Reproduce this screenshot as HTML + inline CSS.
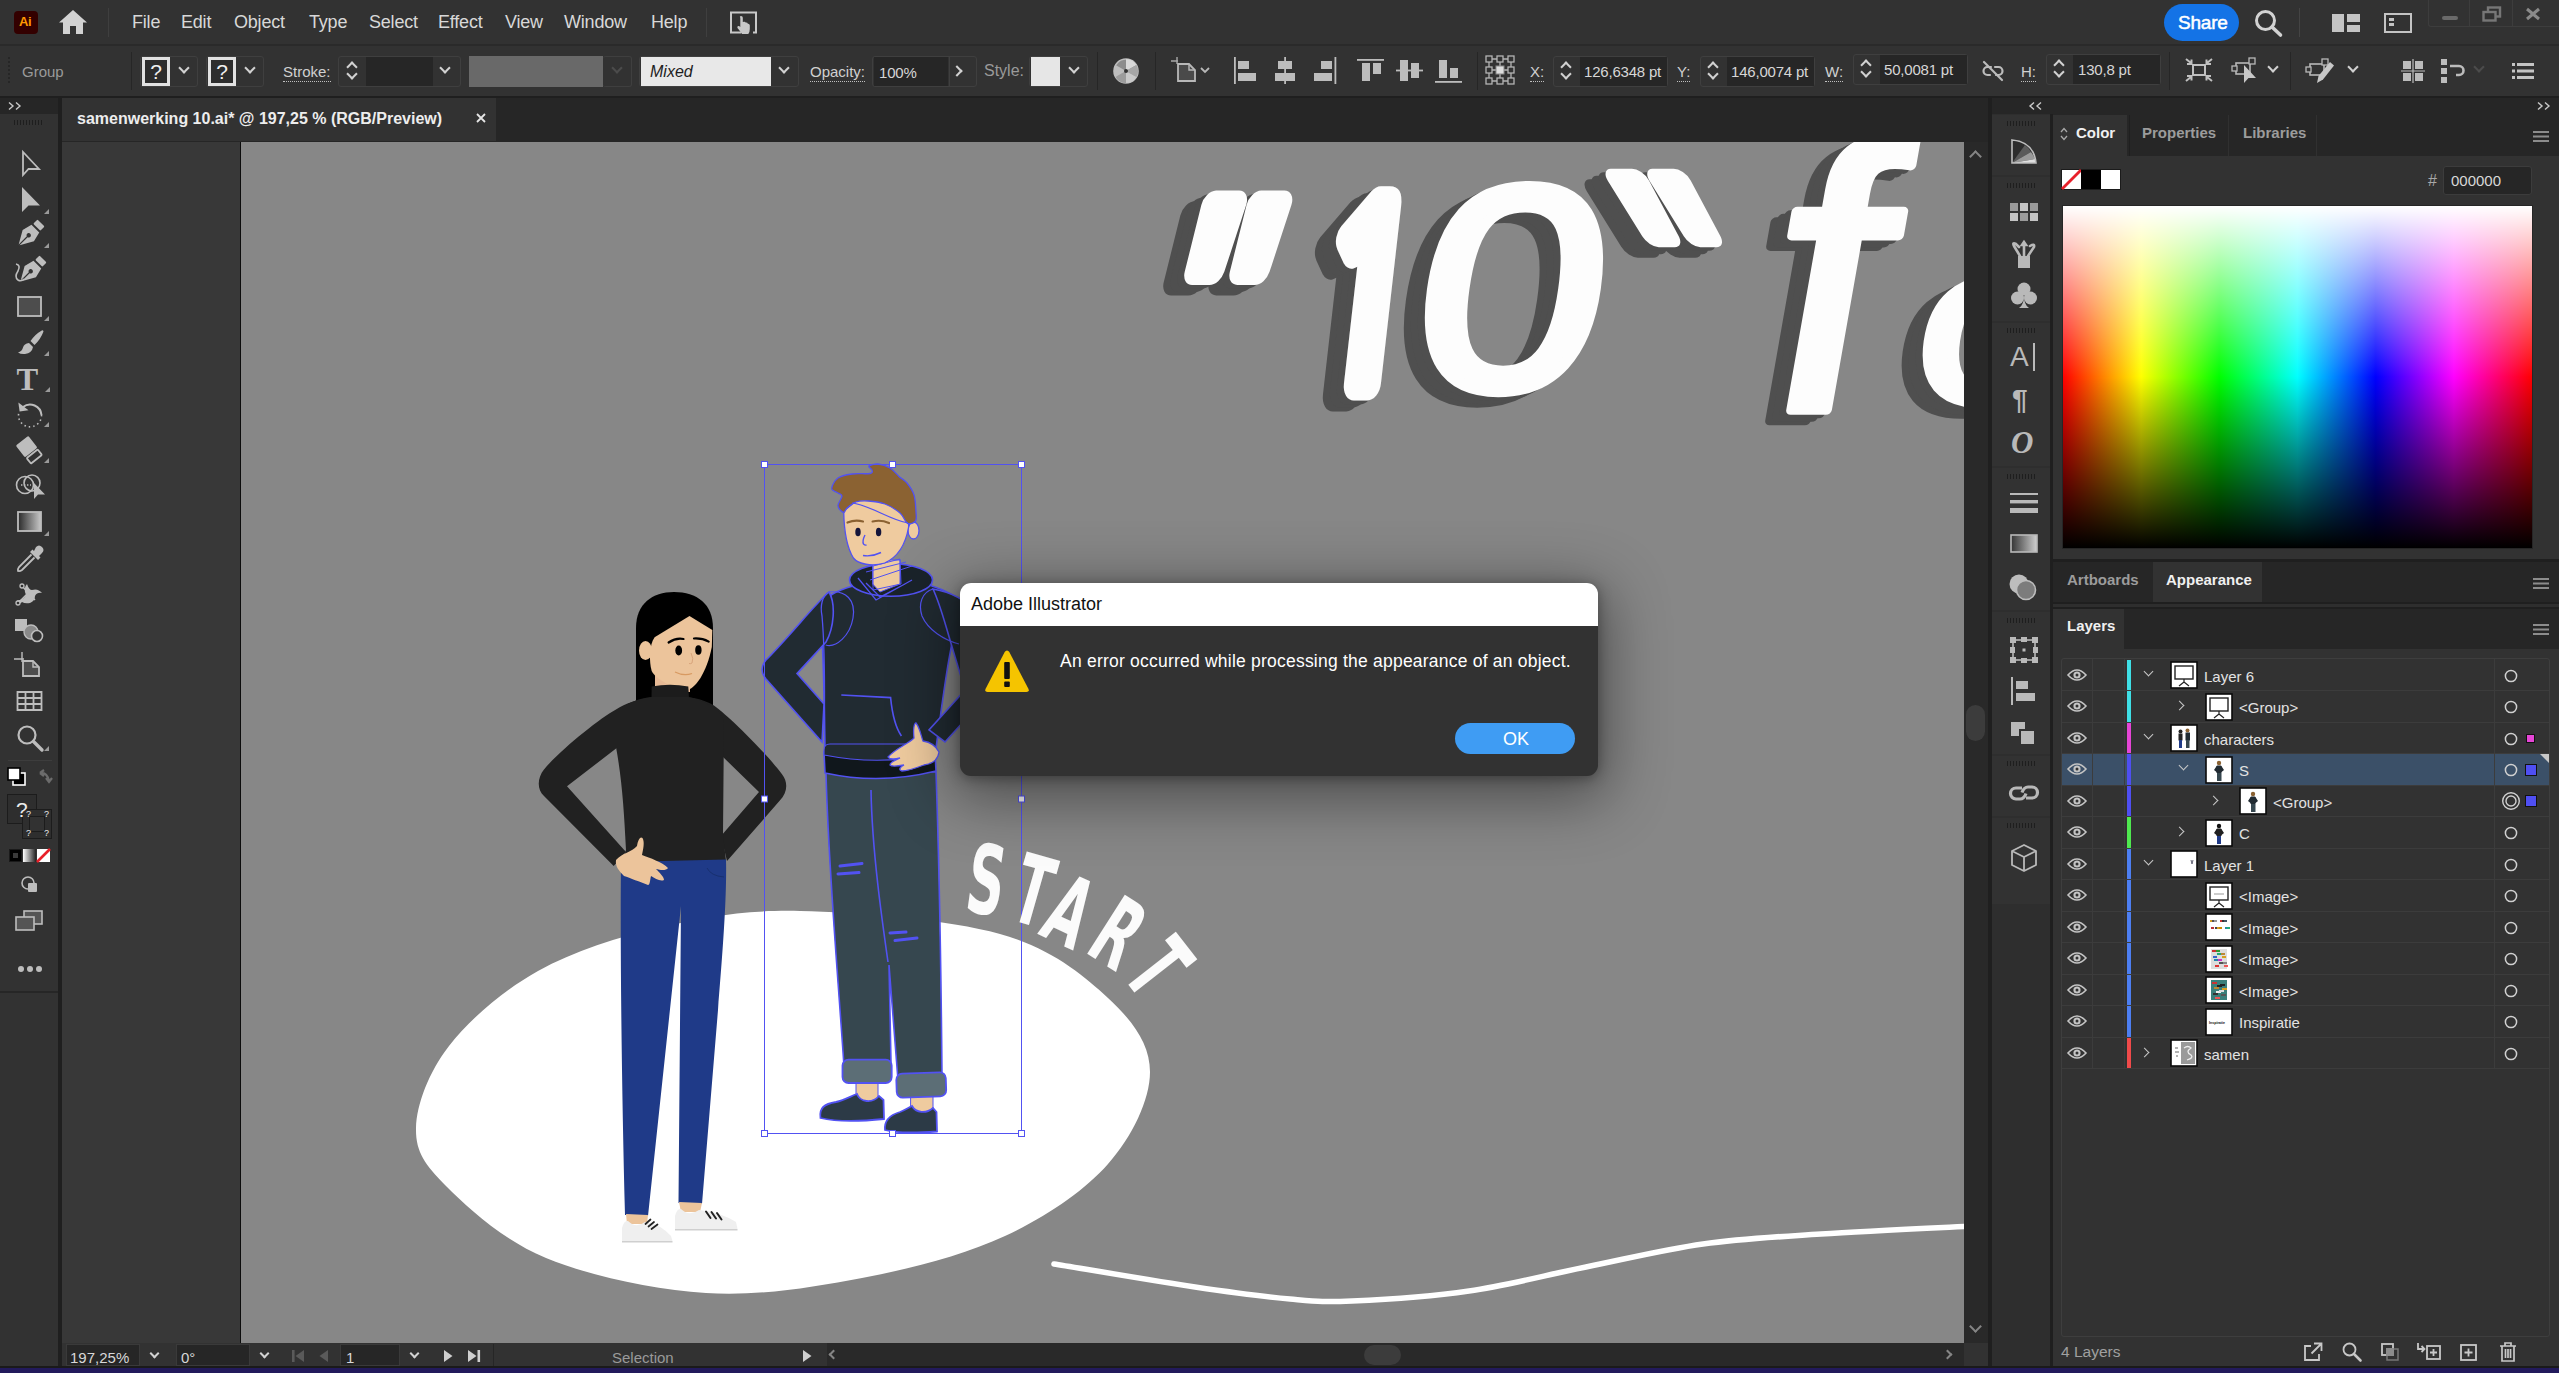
<!DOCTYPE html>
<html lang="en"><head><meta charset="utf-8"><title>Adobe Illustrator</title>
<style>
*{box-sizing:border-box;margin:0;padding:0}
html,body{width:2559px;height:1373px;overflow:hidden;background:#323232}
body{font-family:"Liberation Sans",sans-serif;color:#d6d6d6;font-size:15px}
#app{position:relative;width:2559px;height:1373px;overflow:hidden;background:#323232}
.abs{position:absolute}
.t{position:absolute;white-space:nowrap;line-height:1}
svg{position:absolute;overflow:visible}
.fld{position:absolute;background:#262626;border:1px solid #3e3e3e;border-radius:2px}
.sep{position:absolute;width:1px;background:#262626}
.dotu{border-bottom:1px dotted #bdbdbd;padding-bottom:1px}
</style>
<style>
.chv{position:absolute;width:8px;height:8px;border-right:2px solid #d2d2d2;border-bottom:2px solid #d2d2d2;transform:rotate(45deg)}
.chu{position:absolute;width:8px;height:8px;border-left:2px solid #d2d2d2;border-top:2px solid #d2d2d2;transform:rotate(45deg)}
.chr{position:absolute;width:8px;height:8px;border-right:2px solid #d2d2d2;border-top:2px solid #d2d2d2;transform:rotate(45deg)}
.chl{position:absolute;width:8px;height:8px;border-left:2px solid #d2d2d2;border-bottom:2px solid #d2d2d2;transform:rotate(45deg)}
.grp{position:absolute;border:1px solid #3f3f3f;border-radius:3px}
.cb{font-size:15px;color:#d6d6d6;letter-spacing:-0.2px;margin-top:1px}
.lbl{font-size:15px;margin-top:1px;color:#d0d0d0;border-bottom:1px dotted #c0c0c0;padding-bottom:2px}
.qbox{position:absolute;width:28px;height:29px;border:3px solid #e2e2e2;background:#2d2d2d;color:#f0f0f0;font-size:21px;text-align:center;line-height:23px}
</style>
</head><body>
<div id="app">
<!-- top.html -->
<!-- ===== MENU BAR ===== -->
<div class="abs" style="left:0;top:0;width:2559px;height:44px;background:#323232"></div>
<div class="abs" style="left:14px;top:11px;width:24px;height:23px;border-radius:4px;background:#330000"></div>
<div class="t" style="left:19px;top:15px;font-size:13px;font-weight:bold;color:#ff9a00;letter-spacing:-0.5px">Ai</div>
<svg style="left:58px;top:9px" width="30" height="26" viewBox="0 0 30 26"><path d="M15 1 L1 13.5 H5 V25 H12 V17 H18 V25 H25 V13.5 H29 Z" fill="#d2d2d2"/></svg>
<div class="sep" style="left:108px;top:8px;height:29px;background:#3f3f3f"></div>
<div class="t" style="left:132px;top:13px;font-size:18px;color:#d8d8d8;letter-spacing:-0.2px">File</div>
<div class="t" style="left:181px;top:13px;font-size:18px;color:#d8d8d8;letter-spacing:-0.2px">Edit</div>
<div class="t" style="left:234px;top:13px;font-size:18px;color:#d8d8d8;letter-spacing:-0.2px">Object</div>
<div class="t" style="left:309px;top:13px;font-size:18px;color:#d8d8d8;letter-spacing:-0.2px">Type</div>
<div class="t" style="left:369px;top:13px;font-size:18px;color:#d8d8d8;letter-spacing:-0.2px">Select</div>
<div class="t" style="left:438px;top:13px;font-size:18px;color:#d8d8d8;letter-spacing:-0.2px">Effect</div>
<div class="t" style="left:505px;top:13px;font-size:18px;color:#d8d8d8;letter-spacing:-0.2px">View</div>
<div class="t" style="left:564px;top:13px;font-size:18px;color:#d8d8d8;letter-spacing:-0.2px">Window</div>
<div class="t" style="left:651px;top:13px;font-size:18px;color:#d8d8d8;letter-spacing:-0.2px">Help</div>
<div class="sep" style="left:706px;top:8px;height:29px;background:#3f3f3f"></div>
<svg style="left:729px;top:10px" width="30" height="26" viewBox="0 0 30 26"><path d="M12 22.5 H2 V2.5 H27 V22.5 H24" fill="none" stroke="#c8c8c8" stroke-width="2"/><path d="M12 6 q1.8 0 1.8 1.8 V12 l1.2 -.3 q1.6 -.2 1.8 1 q1.6 -.4 2 1 q1.8 -.3 2 1.6 V19 q0 3 -1.5 5 H13 q-2 -3 -4.5 -6 q-.8 -1.6 .8 -2 q1 -.2 2 1 V7.8 Q10.2 6 12 6Z" fill="#c8c8c8"/></svg>
<!-- right side of menu bar -->
<div class="abs" style="left:2164px;top:4px;width:75px;height:37px;border-radius:19px;background:#1473e6"></div>
<div class="t" style="left:2178px;top:13px;font-size:19px;color:#fff;-webkit-text-stroke:0.5px #fff;letter-spacing:-0.2px">Share</div>
<svg style="left:2253px;top:8px" width="32" height="30" viewBox="0 0 32 30"><circle cx="12.5" cy="12.5" r="9" fill="none" stroke="#d2d2d2" stroke-width="3"/><path d="M19 19 L27.5 27" stroke="#d2d2d2" stroke-width="3.6" stroke-linecap="round"/></svg>
<div class="sep" style="left:2299px;top:8px;height:29px;background:#444"></div>
<svg style="left:2332px;top:14px" width="28" height="18" viewBox="0 0 28 18"><rect x="0" y="0" width="12" height="18" fill="#c4c4c4"/><rect x="15" y="0" width="13" height="8" fill="#c4c4c4"/><rect x="15" y="11" width="13" height="7" fill="#c4c4c4"/></svg>
<svg style="left:2384px;top:13px" width="28" height="20" viewBox="0 0 28 20"><rect x="1" y="1" width="26" height="18" fill="none" stroke="#c4c4c4" stroke-width="2"/><rect x="5" y="5" width="5" height="3" fill="#c4c4c4"/><rect x="5" y="10" width="5" height="3" fill="#c4c4c4"/></svg>
<div class="abs" style="left:2428px;top:0;width:131px;height:27px;border:1px solid #3d3d3d;border-top:0;border-right:0;border-radius:0 0 0 3px"></div>
<div class="abs" style="left:2469px;top:0;width:1px;height:27px;background:#3d3d3d"></div>
<div class="abs" style="left:2512px;top:0;width:1px;height:27px;background:#3d3d3d"></div>
<div class="abs" style="left:2442px;top:16px;width:16px;height:4px;border-radius:2px;background:#6a6a6a"></div>
<svg style="left:2482px;top:6px" width="20" height="16" viewBox="0 0 20 16"><rect x="6" y="1.5" width="12" height="9" fill="none" stroke="#777" stroke-width="2.4"/><rect x="1.5" y="6" width="12" height="8.5" fill="#323232" stroke="#777" stroke-width="2.4"/></svg>
<svg style="left:2525px;top:7px" width="16" height="14" viewBox="0 0 16 14"><path d="M2 2 L14 12 M14 2 L2 12" stroke="#8a8a8a" stroke-width="3" stroke-linecap="butt"/></svg>
<!-- ===== CONTROL BAR ===== -->
<div class="abs" style="left:0;top:44px;width:2559px;height:2px;background:#2a2a2a"></div>
<div class="abs" style="left:0;top:46px;width:2559px;height:50px;background:#323232"></div>
<div class="abs" style="left:0;top:96px;width:2559px;height:2px;background:#1f1f1f"></div>
<div class="abs" style="left:8px;top:57px;width:2px;height:28px;background:repeating-linear-gradient(#262626 0 2px,transparent 2px 4px)"></div>
<div class="t" style="left:22px;top:64px;font-size:15px;color:#9a9a9a">Group</div>
<div class="sep" style="left:131px;top:52px;height:38px"></div>
<!-- fill / stroke question boxes -->
<div class="grp" style="left:140px;top:56px;width:58px;height:31px"></div>
<div class="qbox" style="left:142px;top:57px">?</div>
<div class="chv" style="left:180px;top:64px"></div>
<div class="grp" style="left:206px;top:56px;width:58px;height:31px"></div>
<div class="qbox" style="left:208px;top:57px">?</div>
<div class="chv" style="left:246px;top:64px"></div>
<div class="t lbl" style="left:283px;top:63px">Stroke:</div>
<div class="grp" style="left:338px;top:56px;width:123px;height:31px"></div>
<div class="chu" style="left:348px;top:63px"></div><div class="chv" style="left:348px;top:70px"></div>
<div class="abs" style="left:366px;top:57px;width:67px;height:29px;background:#262626"></div>
<div class="chv" style="left:441px;top:64px"></div>
<div class="abs" style="left:469px;top:56px;width:134px;height:31px;background:#696969"></div>
<div class="grp" style="left:603px;top:56px;width:29px;height:31px;border-left:0"></div>
<div class="chv" style="left:613px;top:64px;border-color:#4c4c4c"></div>
<div class="grp" style="left:639px;top:56px;width:160px;height:31px"></div>
<div class="abs" style="left:641px;top:57px;width:130px;height:29px;background:#e8e8e8"></div>
<div class="t" style="left:650px;top:64px;font-size:16px;font-style:italic;color:#1e1e1e">Mixed</div>
<div class="chv" style="left:780px;top:64px"></div>
<div class="t lbl" style="left:810px;top:63px">Opacity:</div>
<div class="grp" style="left:872px;top:56px;width:105px;height:31px"></div>
<div class="abs" style="left:874px;top:57px;width:74px;height:29px;background:#262626"></div>
<div class="t cb" style="left:879px;top:64px">100%</div>
<div class="abs" style="left:949px;top:57px;width:1px;height:29px;background:#3f3f3f"></div>
<div class="chr" style="left:953px;top:67px"></div>
<div class="t" style="left:984px;top:63px;font-size:16px;color:#9a9a9a">Style:</div>
<div class="grp" style="left:1029px;top:56px;width:59px;height:31px"></div>
<div class="abs" style="left:1031px;top:57px;width:29px;height:29px;background:#e6e6e6"></div>
<div class="chv" style="left:1070px;top:64px"></div>
<div class="sep" style="left:1097px;top:52px;height:38px"></div>
<!-- recolor globe -->
<svg style="left:1113px;top:58px" width="26" height="26" viewBox="0 0 26 26"><circle cx="13" cy="13" r="12" fill="#8c8c8c" stroke="#bdbdbd" stroke-width="1.6"/><path d="M13 13 L13 1 A12 12 0 0 1 23.4 7 Z" fill="#d8d8d8"/><path d="M13 13 L23.4 7 A12 12 0 0 1 23.4 19Z" fill="#a6a6a6"/><path d="M13 13 L23.4 19 A12 12 0 0 1 13 25Z" fill="#c9c9c9"/><path d="M13 13 L13 25 A12 12 0 0 1 2.6 19Z" fill="#9c9c9c"/><path d="M13 13 L2.6 19 A12 12 0 0 1 2.6 7Z" fill="#bdbdbd"/><circle cx="13" cy="13" r="2" fill="#333"/></svg>
<div class="sep" style="left:1155px;top:52px;height:38px"></div>
<!-- document setup -->
<svg style="left:1170px;top:56px" width="42" height="30" viewBox="0 0 42 30"><path d="M7 1 V8 M1 5 H8" stroke="#a8a8a8" stroke-width="1.4"/><path d="M8 8 H19 L25 14 V25 H8Z" fill="#4a4a4a" stroke="#b8b8b8" stroke-width="1.8"/><path d="M19 8 V14 H25" fill="none" stroke="#b8b8b8" stroke-width="1.4"/><path d="M31 12 L35 16 L39 12" fill="none" stroke="#b8b8b8" stroke-width="1.8"/></svg>
<!-- align icons -->
<svg style="left:1233px;top:56px" width="24" height="30" viewBox="0 0 24 30"><rect x="1" y="1" width="1.8" height="27" fill="#bcbcbc"/><rect x="5" y="5" width="11" height="8" fill="#bcbcbc"/><rect x="5" y="17" width="18" height="8" fill="#bcbcbc"/></svg>
<svg style="left:1274px;top:56px" width="24" height="30" viewBox="0 0 24 30"><rect x="10.2" y="1" width="1.8" height="27" fill="#bcbcbc"/><rect x="4" y="5" width="14" height="8" fill="#bcbcbc"/><rect x="1" y="17" width="20" height="8" fill="#bcbcbc"/></svg>
<svg style="left:1312px;top:56px" width="26" height="30" viewBox="0 0 26 30"><rect x="22.5" y="1" width="1.8" height="27" fill="#bcbcbc"/><rect x="9" y="5" width="11" height="8" fill="#bcbcbc"/><rect x="2" y="17" width="18" height="8" fill="#bcbcbc"/></svg>
<svg style="left:1356px;top:58px" width="30" height="26" viewBox="0 0 30 26"><rect x="1" y="1" width="27" height="1.8" fill="#bcbcbc"/><rect x="6" y="5" width="8" height="18" fill="#bcbcbc"/><rect x="17" y="5" width="8" height="11" fill="#bcbcbc"/></svg>
<svg style="left:1395px;top:58px" width="30" height="26" viewBox="0 0 30 26"><rect x="1" y="11.6" width="27" height="1.8" fill="#bcbcbc"/><rect x="5" y="2" width="8" height="21" fill="#bcbcbc"/><rect x="16" y="5" width="8" height="15" fill="#bcbcbc"/></svg>
<svg style="left:1434px;top:58px" width="30" height="26" viewBox="0 0 30 26"><rect x="1" y="23" width="27" height="1.8" fill="#bcbcbc"/><rect x="5" y="2" width="8" height="18" fill="#bcbcbc"/><rect x="16" y="10" width="8" height="10" fill="#bcbcbc"/></svg>
<div class="sep" style="left:1477px;top:52px;height:38px"></div>
<!-- reference point grid -->
<svg style="left:1485px;top:55px" width="30" height="30" viewBox="0 0 30 30"><g fill="none" stroke="#b4b4b4" stroke-width="1.3"><path d="M4 4 H26 V26 H4Z M15 4 V26 M4 15 H26"/></g><g fill="#323232" stroke="#b4b4b4" stroke-width="1.3"><rect x="1" y="1" width="6" height="6"/><rect x="12" y="1" width="6" height="6"/><rect x="23" y="1" width="6" height="6"/><rect x="1" y="12" width="6" height="6"/><rect x="23" y="12" width="6" height="6"/><rect x="1" y="23" width="6" height="6"/><rect x="12" y="23" width="6" height="6"/><rect x="23" y="23" width="6" height="6"/></g><rect x="11" y="11" width="8" height="8" fill="#dcdcdc" stroke="#8a8a8a"/></svg>
<!-- X Y W H -->
<div class="t lbl" style="left:1530px;top:63px">X:</div>
<div class="grp" style="left:1553px;top:56px;width:115px;height:31px"></div>
<div class="chu" style="left:1562px;top:63px"></div><div class="chv" style="left:1562px;top:70px"></div>
<div class="abs" style="left:1580px;top:57px;width:87px;height:29px;background:#262626"></div>
<div class="t cb" style="left:1584px;top:63px">126,6348 pt</div>
<div class="t lbl" style="left:1677px;top:63px">Y:</div>
<div class="grp" style="left:1700px;top:56px;width:115px;height:31px"></div>
<div class="chu" style="left:1709px;top:63px"></div><div class="chv" style="left:1709px;top:70px"></div>
<div class="abs" style="left:1727px;top:57px;width:87px;height:29px;background:#262626"></div>
<div class="t cb" style="left:1731px;top:63px">146,0074 pt</div>
<div class="t lbl" style="left:1825px;top:63px">W:</div>
<div class="grp" style="left:1853px;top:54px;width:115px;height:31px"></div>
<div class="chu" style="left:1862px;top:61px"></div><div class="chv" style="left:1862px;top:68px"></div>
<div class="abs" style="left:1880px;top:55px;width:87px;height:29px;background:#262626"></div>
<div class="t cb" style="left:1884px;top:61px">50,0081 pt</div>
<svg style="left:1981px;top:60px" width="24" height="22" viewBox="0 0 24 22"><g fill="none" stroke="#bcbcbc" stroke-width="2.2" stroke-linecap="round"><path d="M10 7 H6.5 a4 4 0 0 0 0 8 H9"/><path d="M14 7 H17.5 a4 4 0 0 1 0 8 H15"/><path d="M3 2 L21 20"/></g></svg>
<div class="t lbl" style="left:2021px;top:63px">H:</div>
<div class="grp" style="left:2046px;top:54px;width:115px;height:31px"></div>
<div class="chu" style="left:2055px;top:61px"></div><div class="chv" style="left:2055px;top:68px"></div>
<div class="abs" style="left:2073px;top:55px;width:87px;height:29px;background:#262626"></div>
<div class="t cb" style="left:2078px;top:61px">130,8 pt</div>
<div class="sep" style="left:2169px;top:52px;height:38px"></div>
<!-- right cluster icons -->
<svg style="left:2184px;top:57px" width="30" height="26" viewBox="0 0 30 26"><rect x="9" y="8" width="12" height="10" fill="none" stroke="#c0c0c0" stroke-width="2"/><g stroke="#c0c0c0" stroke-width="2" fill="none"><path d="M2 2 L7 6 M3 7 H7.5 V2.5"/><path d="M28 2 L23 6 M27 7 H22.5 V2.5"/><path d="M2 24 L7 20 M3 19 H7.5 V23.5"/><path d="M28 24 L23 20 M27 19 H22.5 V23.5"/></g></svg>
<svg style="left:2231px;top:56px" width="34" height="30" viewBox="0 0 34 30"><rect x="5" y="7" width="14" height="11" fill="none" stroke="#b8b8b8" stroke-width="1.6"/><rect x="1" y="10" width="5" height="5" fill="#323232" stroke="#b8b8b8" stroke-width="1.3"/><rect x="18" y="2" width="6" height="6" fill="#323232" stroke="#b8b8b8" stroke-width="1.3"/><path d="M13 9 V27 L17.5 22 L25 22Z" fill="#c8c8c8"/></svg>
<div class="chv" style="left:2269px;top:63px"></div>
<div class="sep" style="left:2290px;top:52px;height:38px"></div>
<svg style="left:2305px;top:56px" width="32" height="30" viewBox="0 0 32 30"><rect x="5" y="8" width="14" height="11" fill="none" stroke="#b8b8b8" stroke-width="1.6"/><rect x="1" y="11" width="5" height="5" fill="#323232" stroke="#b8b8b8" stroke-width="1.3"/><rect x="17" y="3" width="6" height="6" fill="#323232" stroke="#b8b8b8" stroke-width="1.3"/><path d="M12 27 L13.5 20 L25 6 L29 9.5 L18 23.5Z" fill="#c8c8c8"/></svg>
<div class="chv" style="left:2349px;top:63px"></div>
<svg style="left:2400px;top:58px" width="26" height="26" viewBox="0 0 26 26"><g fill="#bcbcbc"><rect x="3" y="3" width="8" height="8"/><rect x="15" y="3" width="8" height="8"/><rect x="3" y="15" width="8" height="8"/><rect x="15" y="15" width="8" height="8"/></g><path d="M13 0 V26 M0 13 H26" stroke="#323232" stroke-width="2"/><path d="M13 1 V25 M1 13 H25" stroke="#bcbcbc" stroke-width="1.2"/></svg>
<svg style="left:2440px;top:58px" width="26" height="26" viewBox="0 0 26 26"><g fill="#bcbcbc"><rect x="1" y="1" width="6" height="6"/><rect x="1" y="10" width="6" height="6"/><rect x="1" y="19" width="6" height="6"/></g><path d="M10 8 H19 a4.5 4.5 0 0 1 0 9 H16" fill="none" stroke="#bcbcbc" stroke-width="2.6"/></svg>
<div class="chv" style="left:2475px;top:63px;border-color:#4c4c4c"></div>
<svg style="left:2512px;top:62px" width="22" height="18" viewBox="0 0 22 18"><g fill="#c4c4c4"><rect x="0" y="1" width="3" height="3"/><rect x="5" y="1" width="17" height="3"/><rect x="0" y="7.5" width="3" height="3"/><rect x="5" y="7.5" width="17" height="3"/><rect x="0" y="14" width="3" height="3"/><rect x="5" y="14" width="17" height="3"/></g></svg>
<!-- ===== DOC TAB STRIP ===== -->
<div class="abs" style="left:58px;top:98px;width:1934px;height:44px;background:#262626"></div>
<div class="abs" style="left:62px;top:98px;width:434px;height:43px;background:#323232"></div>
<div class="t" style="left:77px;top:111px;font-size:16px;font-weight:bold;color:#ededed">samenwerking 10.ai* @ 197,25 % (RGB/Preview)</div>
<svg style="left:476px;top:113px" width="10" height="10" viewBox="0 0 10 10"><path d="M1 1 L9 9 M9 1 L1 9" stroke="#e6e6e6" stroke-width="1.8"/></svg>
<!-- left.html -->
<!-- ===== LEFT TOOLBAR ===== -->
<div class="abs" style="left:0;top:98px;width:58px;height:1268px;background:#323232"></div>
<div class="abs" style="left:58px;top:98px;width:4px;height:1268px;background:#1f1f1f"></div>
<div class="abs" style="left:0;top:98px;width:58px;height:16px;background:#262626"></div>
<svg style="left:8px;top:101px" width="14" height="10" viewBox="0 0 14 10"><path d="M1 1.5 L5 5 L1 8.5 M8 1.5 L12 5 L8 8.5" fill="none" stroke="#c8c8c8" stroke-width="1.4"/></svg>
<div class="abs" style="left:14px;top:120px;width:28px;height:5px;background:repeating-linear-gradient(90deg,#1e1e1e 0 1px,transparent 1px 3px)"></div>
<!-- selection tool -->
<svg style="left:14px;top:148px" width="32" height="32" viewBox="0 0 32 32"><path d="M9 4 V27 L14.5 21 H25 Z" fill="none" stroke="#bdbdbd" stroke-width="1.8" stroke-linejoin="miter"/></svg>
<!-- direct selection -->
<svg style="left:14px;top:184px" width="40" height="34" viewBox="0 0 40 34"><path d="M8 3 V28 L14.5 21.5 H26 Z" fill="#bdbdbd"/><path d="M35 25 V30 H30Z" fill="#9a9a9a"/></svg>
<!-- pen -->
<svg style="left:12px;top:218px" width="42" height="34" viewBox="0 0 42 34"><g transform="rotate(45 17 17)" fill="#bdbdbd"><rect x="12" y="0" width="10" height="6" rx="1"/><path d="M11.5 8 H22.5 L25 18 L17.6 31 V19.5 a2.2 2.2 0 1 0 -1.2 0 V31 L9 18Z"/></g><path d="M37 25 V30 H32Z" fill="#9a9a9a"/></svg>
<!-- curvature -->
<svg style="left:10px;top:254px" width="42" height="34" viewBox="0 0 42 34"><g transform="translate(4 0) rotate(45 17 17)" fill="#bdbdbd"><rect x="12" y="0" width="10" height="6" rx="1"/><path d="M11.5 8 H22.5 L25 18 L17.6 31 V19.5 a2.2 2.2 0 1 0 -1.2 0 V31 L9 18Z"/></g><path d="M6 10 q5 1 2 7 q-4 6 0 9 q3 2 6 -1" fill="none" stroke="#bdbdbd" stroke-width="1.6"/></svg>
<!-- rectangle -->
<svg style="left:16px;top:295px" width="38" height="30" viewBox="0 0 38 30"><rect x="2" y="2" width="23" height="19" fill="#4d4d4d" stroke="#bdbdbd" stroke-width="1.8"/><path d="M33 21 V26 H28Z" fill="#9a9a9a"/></svg>
<!-- brush -->
<svg style="left:14px;top:326px" width="40" height="36" viewBox="0 0 40 36"><path d="M27 5 q2 -1.5 2.5 .5 q-3 8 -9 13.5 l-4 -4 q5 -7 10.5 -10Z" fill="#bdbdbd"/><path d="M15 17 l4 4 q-1 6 -8 7 q-4 .5 -7 -1.5 q4 -1 5 -5 q1 -4 6 -4.500Z" fill="#bdbdbd"/><path d="M35 25 V30 H30Z" fill="#9a9a9a"/></svg>
<!-- type -->
<div class="t" style="left:17px;top:364px;font-family:'Liberation Serif',serif;font-size:31px;color:#bdbdbd;font-weight:bold;transform:scaleX(1.05)">T</div>
<svg style="left:44px;top:386px" width="8" height="8" viewBox="0 0 8 8"><path d="M6 1 V6 H1Z" fill="#9a9a9a"/></svg>
<!-- rotate -->
<svg style="left:14px;top:398px" width="40" height="34" viewBox="0 0 40 34"><path d="M9 9 A11.5 11.5 0 0 1 27.5 17" fill="none" stroke="#bdbdbd" stroke-width="2"/><path d="M5 4 V13 H14Z" fill="#bdbdbd" transform="rotate(-8 9 9)"/><path d="M27.500 17 A11.5 11.5 0 1 1 5 14" fill="none" stroke="#bdbdbd" stroke-width="1.6" stroke-dasharray="1.5 3"/><path d="M35 24 V29 H30Z" fill="#9a9a9a"/></svg>
<!-- eraser -->
<svg style="left:14px;top:434px" width="40" height="34" viewBox="0 0 40 34"><g transform="rotate(-38 16 17)"><rect x="8" y="4" width="16" height="15" rx="1.5" fill="#bdbdbd"/><rect x="9" y="20.500" width="14" height="7" rx="1" fill="none" stroke="#bdbdbd" stroke-width="1.8"/></g><path d="M35 24 V29 H30Z" fill="#9a9a9a"/></svg>
<!-- shape builder -->
<svg style="left:12px;top:470px" width="40" height="34" viewBox="0 0 40 34"><circle cx="13" cy="15" r="8.500" fill="none" stroke="#bdbdbd" stroke-width="1.6"/><circle cx="20" cy="13" r="8" fill="none" stroke="#bdbdbd" stroke-width="1.6"/><path d="M9 15 H19" stroke="#bdbdbd" stroke-width="1.4" stroke-dasharray="1.400 1.600"/><path d="M22 13 V29 L26 24.500 H33Z" fill="#bdbdbd"/></svg>
<!-- gradient -->
<svg style="left:16px;top:510px" width="38" height="30" viewBox="0 0 38 30"><defs><linearGradient id="lg1" x1="0" x2="1"><stop offset="0" stop-color="#2a2a2a"/><stop offset="1" stop-color="#c8c8c8"/></linearGradient></defs><rect x="2" y="2" width="23" height="19" fill="url(#lg1)" stroke="#bdbdbd" stroke-width="1.8"/><path d="M33 21 V26 H28Z" fill="#9a9a9a"/></svg>
<!-- eyedropper -->
<svg style="left:14px;top:542px" width="36" height="34" viewBox="0 0 36 34"><path d="M22 5 q3 -3 6 0 q3 3 0 6 l-3 3 l1.500 1.500 l-2.500 2.500 l-8 -8 l2.500 -2.500 l1.500 1.500Z" fill="#bdbdbd"/><path d="M17.500 12.500 L5 25 q-1.500 2 -1 4 q2 .5 4 -1 L20.500 15.500" fill="none" stroke="#bdbdbd" stroke-width="1.800"/></svg>
<!-- puppet warp -->
<svg style="left:12px;top:578px" width="38" height="34" viewBox="0 0 38 34"><path d="M5 22 q6 1 9 -5 q-3 -7 1 -11 q2 6 5 6 q6 -2 10 3 q-5 -1 -7 3 q0 5 -5 7 q-5 1 -8 -1 q-2 3 -5 -2Z" fill="#bdbdbd"/><path d="M10 8 L23 22 M6 25 L17 14" stroke="#bdbdbd" stroke-width="1.400"/><circle cx="10" cy="8" r="2" fill="#323232" stroke="#bdbdbd" stroke-width="1.300"/><circle cx="6" cy="25" r="2" fill="#323232" stroke="#bdbdbd" stroke-width="1.300"/></svg>
<!-- live paint / shape -->
<svg style="left:12px;top:615px" width="36" height="32" viewBox="0 0 36 32"><rect x="3" y="4" width="12" height="12" fill="#bdbdbd"/><circle cx="19" cy="17" r="7" fill="#8a8a8a" stroke="#bdbdbd" stroke-width="1.400"/><circle cx="25" cy="21" r="5.500" fill="#323232" stroke="#bdbdbd" stroke-width="1.600"/></svg>
<!-- artboard -->
<svg style="left:12px;top:650px" width="36" height="32" viewBox="0 0 36 32"><path d="M10 2 V12 M2 9 H12" stroke="#bdbdbd" stroke-width="1.400"/><path d="M11 11 H21 L27 17 V26 H11Z" fill="#4d4d4d" stroke="#bdbdbd" stroke-width="1.800"/><path d="M21 11 V17 H27" fill="none" stroke="#bdbdbd" stroke-width="1.400"/></svg>
<!-- grid -->
<svg style="left:16px;top:690px" width="28" height="24" viewBox="0 0 28 24"><path d="M1.500 2 H25.500 V20 H1.500Z M1.500 8 H25.500 M1.500 14 H25.500 M9.500 2 V20 M17.500 2 V20" fill="none" stroke="#bdbdbd" stroke-width="1.800"/></svg>
<!-- zoom -->
<svg style="left:14px;top:722px" width="40" height="34" viewBox="0 0 40 34"><circle cx="13" cy="13" r="8.500" fill="none" stroke="#bdbdbd" stroke-width="2.200"/><path d="M19.500 19.500 L28 28" stroke="#bdbdbd" stroke-width="3.400" stroke-linecap="round"/><path d="M35 24 V29 H30Z" fill="#9a9a9a"/></svg>
<div class="abs" style="left:8px;top:760px;width:44px;height:1px;background:#3d3d3d"></div>
<!-- default fill/stroke + swap -->
<svg style="left:6px;top:765px" width="50" height="24" viewBox="0 0 50 24"><rect x="7" y="8" width="12" height="12" fill="#000" stroke="#fff" stroke-width="1.600"/><rect x="2" y="3" width="12" height="12" fill="#fff" stroke="#000" stroke-width="1.600"/><path d="M34 8 q7 -1 9 8 M40 13 l3 4 l3 -4 M34 8 l4 -3 M34 8 l4 3" fill="none" stroke="#6c6c6c" stroke-width="2.200"/></svg>
<!-- fill ? / stroke ? -->
<div class="abs" style="left:7px;top:794px;width:30px;height:30px;border:1px solid #1c1c1c;background:#2e2e2e"></div>
<div class="abs" style="left:22px;top:809px;width:30px;height:30px;border:1px solid #1c1c1c;background:#2e2e2e"></div>
<div class="abs" style="left:29px;top:816px;width:16px;height:16px;border:1px solid #1c1c1c;background:#323232"></div>
<div class="t" style="left:26px;top:810px;font-size:9px;color:#ececec">?</div><div class="t" style="left:44px;top:810px;font-size:9px;color:#ececec">?</div>
<div class="t" style="left:26px;top:829px;font-size:9px;color:#ececec">?</div><div class="t" style="left:44px;top:829px;font-size:9px;color:#ececec">?</div>
<div class="t" style="left:16px;top:799px;font-size:21px;color:#ececec">?</div>
<!-- color / gradient / none -->
<div class="abs" style="left:9px;top:849px;width:13px;height:13px;background:#000;border:1px solid #1a1a1a"></div>
<div class="abs" style="left:13px;top:853px;width:5px;height:5px;background:#3a3a3a"></div>
<div class="abs" style="left:23px;top:849px;width:13px;height:13px;background:linear-gradient(90deg,#fff,#222)"></div>
<svg style="left:37px;top:849px" width="13" height="13" viewBox="0 0 13 13"><rect width="13" height="13" fill="#fff"/><path d="M0 13 L13 0" stroke="#e8202a" stroke-width="2.600"/></svg>
<!-- draw mode -->
<svg style="left:18px;top:874px" width="24" height="22" viewBox="0 0 24 22"><circle cx="10" cy="9" r="6" fill="none" stroke="#bdbdbd" stroke-width="1.600"/><rect x="10" y="9" width="9" height="9" rx="1" fill="#bdbdbd"/></svg>
<!-- screen mode -->
<svg style="left:14px;top:909px" width="30" height="24" viewBox="0 0 30 24"><rect x="10" y="2" width="18" height="13" fill="#555" stroke="#bdbdbd" stroke-width="1.600"/><rect x="2" y="8" width="18" height="13" fill="#555" stroke="#bdbdbd" stroke-width="1.600"/><rect x="10" y="2" width="18" height="13" fill="#555" stroke="#bdbdbd" stroke-width="1.600" opacity=".0"/></svg>
<div class="abs" style="left:18px;top:966px;width:6px;height:6px;border-radius:3px;background:#bdbdbd"></div>
<div class="abs" style="left:27px;top:966px;width:6px;height:6px;border-radius:3px;background:#bdbdbd"></div>
<div class="abs" style="left:36px;top:966px;width:6px;height:6px;border-radius:3px;background:#bdbdbd"></div>
<div class="abs" style="left:0;top:991px;width:58px;height:2px;background:#262626"></div>
<!-- canvas.html -->
<svg style="left:62px;top:142px;overflow:hidden" width="1902" height="1201" viewBox="62 142 1902 1201">
<rect x="62" y="142" width="179" height="1201" fill="#383838"/>
<rect x="240" y="142" width="1.200" height="1201" fill="#0c0c0c"/>
<rect x="241" y="142" width="1723" height="1201" fill="#878787"/>
<g><text transform="translate(1120.0 427.5) skewX(-16) scale(0.93 1.145)" font-family="Liberation Sans, sans-serif" font-weight="normal" font-size="270" fill="#4f4f4f" stroke="#4f4f4f" stroke-width="24" stroke-linejoin="round">&quot;</text><text transform="translate(1286.0 396.5) skewX(-6.5) scale(0.628 0.911)" font-family="NanumGothic, Liberation Sans, sans-serif" font-weight="bold" font-size="270" fill="#4f4f4f" stroke="#4f4f4f" stroke-width="30" stroke-linejoin="round">1</text><text transform="translate(1385.0 399.5) skewX(-8) scale(1.25 1.075)" font-family="Liberation Sans, sans-serif" font-weight="normal" font-size="270" fill="#4f4f4f" stroke="#4f4f4f" stroke-width="10" stroke-linejoin="round">0</text><text transform="translate(1689.0 367.5) skewX(30) scale(0.857 0.952)" font-family="Liberation Sans, sans-serif" font-weight="normal" font-size="270" fill="#4f4f4f" stroke="#4f4f4f" stroke-width="24" stroke-linejoin="round">&quot;</text><text transform="translate(1735.0 420.5) skewX(-10) scale(1.485 1.391)" font-family="Liberation Sans, sans-serif" font-weight="normal" font-size="270" fill="#4f4f4f" stroke="#4f4f4f" stroke-width="7" stroke-linejoin="round">f</text><text transform="translate(1889.0 411.5) skewX(-8) scale(0.986 0.838)" font-family="Liberation Sans, sans-serif" font-weight="normal" font-size="270" fill="#4f4f4f" stroke="#4f4f4f" stroke-width="12" stroke-linejoin="round">o</text><text transform="translate(1127.0 424.0) skewX(-16) scale(0.93 1.145)" font-family="Liberation Sans, sans-serif" font-weight="normal" font-size="270" fill="#4f4f4f" stroke="#4f4f4f" stroke-width="24" stroke-linejoin="round">&quot;</text><text transform="translate(1293.0 393.0) skewX(-6.5) scale(0.628 0.911)" font-family="NanumGothic, Liberation Sans, sans-serif" font-weight="bold" font-size="270" fill="#4f4f4f" stroke="#4f4f4f" stroke-width="30" stroke-linejoin="round">1</text><text transform="translate(1392.0 396.0) skewX(-8) scale(1.25 1.075)" font-family="Liberation Sans, sans-serif" font-weight="normal" font-size="270" fill="#4f4f4f" stroke="#4f4f4f" stroke-width="10" stroke-linejoin="round">0</text><text transform="translate(1696.0 364.0) skewX(30) scale(0.857 0.952)" font-family="Liberation Sans, sans-serif" font-weight="normal" font-size="270" fill="#4f4f4f" stroke="#4f4f4f" stroke-width="24" stroke-linejoin="round">&quot;</text><text transform="translate(1742.0 417.0) skewX(-10) scale(1.485 1.391)" font-family="Liberation Sans, sans-serif" font-weight="normal" font-size="270" fill="#4f4f4f" stroke="#4f4f4f" stroke-width="7" stroke-linejoin="round">f</text><text transform="translate(1896.0 408.0) skewX(-8) scale(0.986 0.838)" font-family="Liberation Sans, sans-serif" font-weight="normal" font-size="270" fill="#4f4f4f" stroke="#4f4f4f" stroke-width="12" stroke-linejoin="round">o</text><text transform="translate(1134.0 420.5) skewX(-16) scale(0.93 1.145)" font-family="Liberation Sans, sans-serif" font-weight="normal" font-size="270" fill="#4f4f4f" stroke="#4f4f4f" stroke-width="24" stroke-linejoin="round">&quot;</text><text transform="translate(1300.0 389.5) skewX(-6.5) scale(0.628 0.911)" font-family="NanumGothic, Liberation Sans, sans-serif" font-weight="bold" font-size="270" fill="#4f4f4f" stroke="#4f4f4f" stroke-width="30" stroke-linejoin="round">1</text><text transform="translate(1399.0 392.5) skewX(-8) scale(1.25 1.075)" font-family="Liberation Sans, sans-serif" font-weight="normal" font-size="270" fill="#4f4f4f" stroke="#4f4f4f" stroke-width="10" stroke-linejoin="round">0</text><text transform="translate(1703.0 360.5) skewX(30) scale(0.857 0.952)" font-family="Liberation Sans, sans-serif" font-weight="normal" font-size="270" fill="#4f4f4f" stroke="#4f4f4f" stroke-width="24" stroke-linejoin="round">&quot;</text><text transform="translate(1749.0 413.5) skewX(-10) scale(1.485 1.391)" font-family="Liberation Sans, sans-serif" font-weight="normal" font-size="270" fill="#4f4f4f" stroke="#4f4f4f" stroke-width="7" stroke-linejoin="round">f</text><text transform="translate(1903.0 404.5) skewX(-8) scale(0.986 0.838)" font-family="Liberation Sans, sans-serif" font-weight="normal" font-size="270" fill="#4f4f4f" stroke="#4f4f4f" stroke-width="12" stroke-linejoin="round">o</text><text transform="translate(1141.0 417.0) skewX(-16) scale(0.93 1.145)" font-family="Liberation Sans, sans-serif" font-weight="normal" font-size="270" fill="#fdfdfd" stroke="#fdfdfd" stroke-width="24" stroke-linejoin="round">&quot;</text><text transform="translate(1307.0 386.0) skewX(-6.5) scale(0.628 0.911)" font-family="NanumGothic, Liberation Sans, sans-serif" font-weight="bold" font-size="270" fill="#fdfdfd" stroke="#fdfdfd" stroke-width="30" stroke-linejoin="round">1</text><text transform="translate(1406.0 389.0) skewX(-8) scale(1.25 1.075)" font-family="Liberation Sans, sans-serif" font-weight="normal" font-size="270" fill="#fdfdfd" stroke="#fdfdfd" stroke-width="10" stroke-linejoin="round">0</text><text transform="translate(1710.0 357.0) skewX(30) scale(0.857 0.952)" font-family="Liberation Sans, sans-serif" font-weight="normal" font-size="270" fill="#fdfdfd" stroke="#fdfdfd" stroke-width="24" stroke-linejoin="round">&quot;</text><text transform="translate(1756.0 410.0) skewX(-10) scale(1.485 1.391)" font-family="Liberation Sans, sans-serif" font-weight="normal" font-size="270" fill="#fdfdfd" stroke="#fdfdfd" stroke-width="7" stroke-linejoin="round">f</text><text transform="translate(1910.0 401.0) skewX(-8) scale(0.986 0.838)" font-family="Liberation Sans, sans-serif" font-weight="normal" font-size="270" fill="#fdfdfd" stroke="#fdfdfd" stroke-width="12" stroke-linejoin="round">o</text></g>
<path d="M800.0 911.0 C856.3 912.2 948.7 919.5 1000.0 934.0 C1051.3 948.5 1083.0 975.0 1108.0 998.0 C1133.0 1021.0 1150.0 1044.3 1150.0 1072.0 C1150.0 1099.7 1132.2 1136.7 1108.0 1164.0 C1083.8 1191.3 1046.0 1217.0 1005.0 1236.0 C964.0 1255.0 911.8 1268.5 862.0 1278.0 C812.2 1287.5 758.7 1296.3 706.0 1293.0 C653.3 1289.7 589.3 1275.8 546.0 1258.0 C502.7 1240.2 467.7 1207.7 446.0 1186.0 C424.3 1164.3 415.5 1151.3 416.0 1128.0 C416.5 1104.7 428.7 1072.2 449.0 1046.0 C469.3 1019.8 502.5 990.8 538.0 971.0 C573.5 951.2 618.3 937.0 662.0 927.0 C705.7 917.0 743.7 909.8 800.0 911.0Z" fill="#ffffff"/>
<path d="M1054.0 1264.0 C1077.5 1267.8 1155.7 1281.2 1195.0 1287.0 C1234.3 1292.8 1263.8 1296.7 1290.0 1299.0 C1316.2 1301.3 1322.2 1302.3 1352.0 1301.0 C1381.8 1299.7 1430.0 1296.7 1469.0 1291.0 C1508.0 1285.3 1547.0 1274.8 1586.0 1267.0 C1625.0 1259.2 1663.8 1249.5 1703.0 1244.0 C1742.2 1238.5 1775.7 1237.0 1821.0 1234.0 C1866.3 1231.0 1949.3 1227.3 1975.0 1226.0" fill="none" stroke="#fff" stroke-width="5.600" stroke-linecap="round"/>
<path d="M636 701 L636 628 C636 604 652 592 674 592 C697 592 713 604 713 628 L713 706 Z" fill="#000"/>
<ellipse cx="645.500" cy="650.500" rx="6.500" ry="9.600" fill="#ecc49b"/>
<path d="M655 672 L690 672 L690 692 L655 692Z" fill="#e6b995"/>
<path d="M689.500 616 L654.600 637.300 C649 645 649 662 651.700 671 C655 679 676 690 686 690 C695 690 707 672 711.800 647 L712.300 630 Z" fill="#ecc49b"/>
<ellipse cx="678.700" cy="650.500" rx="3.400" ry="5" fill="#000"/><ellipse cx="698.400" cy="650" rx="3.200" ry="4.800" fill="#000"/>
<path d="M668.600 642.500 Q676 637.500 683.500 639" fill="none" stroke="#000" stroke-width="2.200" stroke-linecap="round"/>
<path d="M694 638.500 Q702 638 708.700 641.600" fill="none" stroke="#000" stroke-width="2.200" stroke-linecap="round"/>
<path d="M691 653 q3 6 1 10 q-1 1 -3 .500" fill="none" stroke="#d9a57c" stroke-width="1"/>
<path d="M675 672 q9 4.500 17 1.500" fill="none" stroke="#d89a62" stroke-width="1.300"/>
<path d="M651.700 686.500 Q670 683 688.300 686.500 L689 698 L651.500 698Z" fill="#1c1c1c"/>
<path d="M652 697 C636 700 626 703 616 709.400 C600 718 560 750 544 769.500 C537 778 537 790 544 796 L613.700 866 L626 852 L567 786.300 L618 747 Z" fill="#212121"/>
<path d="M688 697 C700 699 706 701 712.300 704.600 C726 713 768 755 782 774.300 C788 782 788 792 779.600 800.800 L727 861 L721 836 L759 792 L722 756 Z" fill="#212121"/>
<path d="M652 697 L688 697 C704 700 718 708 724 720 L723 834 L726 861 L622 863 L626 850 C624 810 622 780 616 747 L616 712 C626 703 640 698 652 697Z" fill="#212121"/>
<path d="M621 862 L726 859.500 C727 900 722 960 718 1010 L702 1204 L678.500 1203 L681 906 L648 1216 L625 1215 C622 1100 620 960 621 862Z" fill="#1f3a88"/>
<path d="M707 868 q4 8 17 9 M660 868 q-4 9 -14 11" stroke="#18306f" stroke-width="1" fill="none"/>
<path d="M616 860 C622 853 632 852 637 846 C638 840 640 836 642.500 838 C645 842 643 850 642 855 C650 858 662 862 668 868 C666 871 660 870 656 869 C660 873 664 877 664 880 C660 882 655 878 651 876 C650 880 650 885 648 885 C640 882 630 878 624 876 C619 871 615 866 616 860Z" fill="#ecc49b"/>
<path d="M626 1214 L648 1215 L647 1224 L627 1224Z" fill="#ecc49b"/><path d="M679 1202 L702 1203 L700 1212 L681 1212Z" fill="#ecc49b"/>
<path d="M622 1241 L622 1228 Q624 1220 628 1221 Q636 1229 645 1222 Q660 1224 671 1236 L672.500 1241Z" fill="#efefef"/>
<path d="M622 1241.700 H672.500" stroke="#cfcfcf" stroke-width="1.400"/>
<path d="M675 1229 L675 1216 Q677 1208 681 1209 Q689 1217 699 1210 Q720 1212 736 1222 L737.500 1229Z" fill="#efefef"/>
<path d="M675 1229.700 H737.500" stroke="#cfcfcf" stroke-width="1.400"/>
<path d="M645.500 1224 l5 -4.500 M648.500 1226.500 l5.500 -4.500 M651.500 1229 l6 -4.500" stroke="#222" stroke-width="1.700" stroke-linecap="round"/>
<path d="M706 1211.500 l4.500 6.500 M711.500 1212 l4.500 6.500 M717 1213 l4.500 6.500" stroke="#222" stroke-width="2" stroke-linecap="round"/>
<g><path d="M826 772 L936 772 C938 830 941 960 942 1076 L897.600 1075 L889 965 L891 1062 L843.700 1061.600 C836 950 828 860 826 772Z" fill="#36474f" stroke="#5252f2" stroke-width="1.600"/><path d="M871 790 C872 850 882 920 888 962" fill="none" stroke="#5252f2" stroke-width="1.600"/><path d="M840 866 l22 -2.500 M838 874 l21 -1.500 M890 933 l16 -1 M895 940.500 l22 -2.500" stroke="#5252f2" stroke-width="3" stroke-linecap="round"/><path d="M856 1082 H878 V1104 H856Z" fill="#efcb9f" stroke="#5252f2" stroke-width="1"/><path d="M910.600 1096 H933 V1116 H910.600Z" fill="#efcb9f" stroke="#5252f2" stroke-width="1"/><rect x="842.500" y="1059.600" width="49.200" height="23.400" rx="6" fill="#5c6e76" stroke="#5252f2" stroke-width="1.800"/><rect x="896.500" y="1073" width="49.500" height="24" rx="6" fill="#5c6e76" stroke="#5252f2" stroke-width="1.800" transform="rotate(-2 921 1085)"/><path d="M820.500 1118 C819 1108 824 1104 836 1102 C845 1100 851 1096 857 1094 C860 1102 872 1104 879 1096 L883.500 1100 L884 1119 C860 1121.500 835 1121.500 820.500 1118Z" fill="#2c3a46" stroke="#5252f2" stroke-width="1.800"/><path d="M885 1130 C884 1120 890 1115 900 1112 C905 1110 908 1108 912 1106 C916 1113 926 1114 933 1108 L936.500 1112 L937 1131.500 C915 1133 895 1133 885 1130Z" fill="#2c3a46" stroke="#5252f2" stroke-width="1.800"/><path d="M853 586 C870 578 916 578 932 586 C945 590 956 596 962 604 C950 640 944 690 936 748 L825 748 C824 700 824 650 820 606 C826 596 838 590 853 586Z" fill="#212b32" stroke="#5252f2" stroke-width="1.600"/><path d="M829 592 C815 604 790 636 766 660 C761 666 761 673 766 679 L822 742 L824 704 L797 673.600 L826 642 C834 628 836 604 829 592Z" fill="#212b32" stroke="#5252f2" stroke-width="1.600"/><path d="M829 592 C822 596 820 606 822 616 C826 660 824 700 824.500 748" fill="none" stroke="#5252f2" stroke-width="1.300"/><path d="M933 589 C950 592 966 600 975 612 L1000 668 C1003 676 1000 682 994 688 L945 742 L929 730 L965 690 L950 640 C944 620 940 604 933 589Z" fill="#212b32" stroke="#5252f2" stroke-width="1.600"/><path d="M829 592 C846 590 856 600 853 618 C850 636 836 648 825.700 645" fill="none" stroke="#5252f2" stroke-width="1.200"/><path d="M933 589 C922 592 918 604 922 616 C928 630 944 640 959 644" fill="none" stroke="#5252f2" stroke-width="1.200"/><path d="M824 752 Q880 766 935 752 L936 771 Q880 785 825 773Z" fill="#10171c" stroke="#5252f2" stroke-width="1.600"/><path d="M830 744 H928 Q934 744 934 750 V754 Q880 766 824 755 V750 Q824 744 830 744Z" fill="#212b32" stroke="#5252f2" stroke-width="1.200"/><path d="M841.300 695 L890.600 697.600 C892 712 896 728 901.400 736" fill="none" stroke="#5252f2" stroke-width="1.600"/><ellipse cx="891" cy="580" rx="41.500" ry="16.300" fill="#1a232a" stroke="#5252f2" stroke-width="1.600"/><path d="M872.600 560 H900 V584 L880 592 L872.600 584Z" fill="#efcb9f" stroke="#5252f2" stroke-width="1"/><path d="M858 578 L876 600 L912 580 M866 583 L880 597 L905 584" fill="none" stroke="#5252f2" stroke-width="1.300"/><path d="M873 566 L900 559 L901 584 L873 590Z M866 572 L906 562 M870 580 L912 566" fill="none" stroke="#5252f2" stroke-width="1"/><path d="M888 757 C896 748 908 744 914 738 C913 730 914 723 916 723 C920 728 921 736 923 741 C930 742 936 746 939 752 C938 760 932 764 924 765 C916 768 908 771 902 771 C898 770 900 767 904 765 C898 766 892 767 890 765 C890 762 896 760 900 758 C896 759 890 760 888 757Z" fill="#efcb9f" stroke="#5252f2" stroke-width="1.300"/><ellipse cx="913.500" cy="530.500" rx="5.500" ry="8.500" fill="#efcb9f" stroke="#5252f2" stroke-width="1.300"/><path d="M843.700 511 C844 530 846 546 853.400 558 C858 564 872 567 884.600 563 C896 558 905 548 908.600 527 L909 508 L860 498Z" fill="#efcb9f" stroke="#5252f2" stroke-width="1.300"/><path d="M831.7 488.5 C831.7 486.0 834.6 480.4 838.0 478.0 C841.4 475.6 846.7 474.8 852.0 474.0 C857.3 473.2 866.7 474.2 870.0 473.5 C873.3 472.8 872.2 471.2 872.0 470.0 C871.8 468.8 868.0 467.0 869.0 466.0 C870.0 465.0 874.5 463.7 878.0 464.0 C881.5 464.3 886.5 465.9 890.0 468.0 C893.5 470.1 896.2 473.9 899.0 476.4 C901.8 478.9 904.5 479.9 907.0 483.0 C909.5 486.1 912.5 490.2 914.0 495.0 C915.5 499.8 915.8 507.7 916.0 512.0 C916.2 516.3 916.9 519.1 915.5 521.0 C914.1 522.9 910.1 524.6 907.5 523.3 C904.9 522.0 903.8 516.2 900.0 513.0 C896.2 509.8 890.3 506.0 885.0 504.0 C879.7 502.0 872.9 501.3 868.0 501.0 C863.1 500.7 859.3 500.8 855.8 502.0 C852.3 503.2 849.0 506.2 847.0 508.0 C845.0 509.8 845.2 512.8 843.7 512.5 C842.2 512.2 838.3 508.8 838.0 506.0 C837.7 503.2 842.0 498.2 842.0 496.0 C842.0 493.8 839.7 494.2 838.0 493.0 C836.3 491.8 831.7 491.0 831.7 488.5Z" fill="#8b6232" stroke="#5252f2" stroke-width="1.300"/><path d="M852 503 C870 505 890 520 908 523" fill="none" stroke="#5252f2" stroke-width="1.200"/><ellipse cx="858" cy="532" rx="2.700" ry="4.300" fill="#15153a"/><ellipse cx="878.600" cy="532" rx="2.700" ry="4.300" fill="#15153a"/><path d="M847.500 522.500 Q855 519.500 863 521.500 M872.600 521.500 Q881 519.500 889 523" fill="none" stroke="#8b6232" stroke-width="2.200" stroke-linecap="round"/><path d="M865 535 q-3 6 -1.500 9 q1.500 1.500 3 1 M863 555.500 q9 1.500 18 -3" fill="none" stroke="#5252f2" stroke-width="1.400"/></g>
<rect x="764.500" y="464.500" width="257" height="669" fill="none" stroke="#5252f2" stroke-width="1"/>
<rect x="761.5" y="461.5" width="6" height="6" fill="#fff" stroke="#5252f2" stroke-width="1"/>
<rect x="889.5" y="461.5" width="6" height="6" fill="#fff" stroke="#5252f2" stroke-width="1"/>
<rect x="1018.5" y="461.5" width="6" height="6" fill="#fff" stroke="#5252f2" stroke-width="1"/>
<rect x="761.5" y="796.0" width="6" height="6" fill="#fff" stroke="#5252f2" stroke-width="1"/>
<rect x="1018.5" y="796.0" width="6" height="6" fill="#fff" stroke="#5252f2" stroke-width="1"/>
<rect x="761.5" y="1130.5" width="6" height="6" fill="#fff" stroke="#5252f2" stroke-width="1"/>
<rect x="889.5" y="1130.5" width="6" height="6" fill="#fff" stroke="#5252f2" stroke-width="1"/>
<rect x="1018.5" y="1130.5" width="6" height="6" fill="#fff" stroke="#5252f2" stroke-width="1"/>
<text transform="translate(986.5 879.0) rotate(8.0) scale(0.600 1)" x="0" y="35" text-anchor="middle" font-family="DejaVu Sans Condensed, Liberation Sans, sans-serif" font-weight="bold" font-size="96" fill="#fbfbfb">S</text>
<text transform="translate(1034.0 890.0) rotate(16.0) scale(0.600 1)" x="0" y="35" text-anchor="middle" font-family="DejaVu Sans Condensed, Liberation Sans, sans-serif" font-weight="bold" font-size="96" fill="#fbfbfb">T</text>
<text transform="translate(1070.0 910.5) rotate(25.0) scale(0.600 1)" x="0" y="35" text-anchor="middle" font-family="DejaVu Sans Condensed, Liberation Sans, sans-serif" font-weight="bold" font-size="96" fill="#fbfbfb">A</text>
<text transform="translate(1119.0 932.5) rotate(32.5) scale(0.600 1)" x="0" y="35" text-anchor="middle" font-family="DejaVu Sans Condensed, Liberation Sans, sans-serif" font-weight="bold" font-size="96" fill="#fbfbfb">R</text>
<text transform="translate(1159.0 967.0) rotate(52.0) scale(0.600 1)" x="0" y="35" text-anchor="middle" font-family="DejaVu Sans Condensed, Liberation Sans, sans-serif" font-weight="bold" font-size="96" fill="#fbfbfb">T</text>
</svg>
<!-- right.html -->
<!-- ===== doc window scrollbars ===== -->
<div class="abs" style="left:1964px;top:142px;width:24px;height:1201px;background:#292929"></div>
<div class="chu" style="left:1971px;top:152px;border-color:#858585;border-width:2px;width:9px;height:9px"></div>
<div class="chv" style="left:1971px;top:1322px;border-color:#858585;border-width:2px;width:9px;height:9px"></div>
<div class="abs" style="left:1966px;top:705px;width:19px;height:36px;border-radius:10px;background:#3c3c3c"></div>
<div class="abs" style="left:1988px;top:98px;width:4px;height:1268px;background:#1f1f1f"></div>
<!-- ===== right dock ===== -->
<div class="abs" style="left:1992px;top:98px;width:567px;height:16px;background:#262626"></div>
<svg style="left:2029px;top:101px" width="14" height="10" viewBox="0 0 14 10"><path d="M5 1.500 L1 5 L5 8.500 M12 1.500 L8 5 L12 8.500" fill="none" stroke="#c8c8c8" stroke-width="1.400"/></svg>
<svg style="left:2537px;top:101px" width="14" height="10" viewBox="0 0 14 10"><path d="M1 1.500 L5 5 L1 8.500 M8 1.500 L12 5 L8 8.500" fill="none" stroke="#c8c8c8" stroke-width="1.400"/></svg>
<div class="abs" style="left:1992px;top:114px;width:58px;height:1252px;background:#2e2e2e"></div>
<div class="abs" style="left:2050px;top:114px;width:3px;height:1252px;background:#1f1f1f"></div>
<div class="abs" style="left:1992px;top:115px;width:58px;height:60px;background:#323232"></div>
<div class="abs" style="left:1992px;top:177px;width:58px;height:144px;background:#323232"></div>
<div class="abs" style="left:1992px;top:323px;width:58px;height:143px;background:#323232"></div>
<div class="abs" style="left:1992px;top:468px;width:58px;height:142px;background:#323232"></div>
<div class="abs" style="left:1992px;top:612px;width:58px;height:142px;background:#323232"></div>
<div class="abs" style="left:1992px;top:756px;width:58px;height:60px;background:#323232"></div>
<div class="abs" style="left:1992px;top:818px;width:58px;height:86px;background:#323232"></div>
<div class="abs" style="left:2007px;top:121px;width:28px;height:5px;background:repeating-linear-gradient(90deg,#1e1e1e 0 1px,transparent 1px 3px)"></div>
<div class="abs" style="left:2007px;top:183px;width:28px;height:5px;background:repeating-linear-gradient(90deg,#1e1e1e 0 1px,transparent 1px 3px)"></div>
<div class="abs" style="left:2007px;top:328px;width:28px;height:5px;background:repeating-linear-gradient(90deg,#1e1e1e 0 1px,transparent 1px 3px)"></div>
<div class="abs" style="left:2007px;top:474px;width:28px;height:5px;background:repeating-linear-gradient(90deg,#1e1e1e 0 1px,transparent 1px 3px)"></div>
<div class="abs" style="left:2007px;top:618px;width:28px;height:5px;background:repeating-linear-gradient(90deg,#1e1e1e 0 1px,transparent 1px 3px)"></div>
<div class="abs" style="left:2007px;top:761px;width:28px;height:5px;background:repeating-linear-gradient(90deg,#1e1e1e 0 1px,transparent 1px 3px)"></div>
<div class="abs" style="left:2007px;top:823px;width:28px;height:5px;background:repeating-linear-gradient(90deg,#1e1e1e 0 1px,transparent 1px 3px)"></div>
<svg style="left:2010px;top:138px" width="28" height="28" viewBox="0 0 28 28"><path d="M2 25 V2 Q10 3 15 7Z" fill="#2c2c2c"/><path d="M2 25 L15 7 Q19 10 21 14Z" fill="#5a5a5a"/><path d="M2 25 L21 14 Q24 18 25 21Z" fill="#9a9a9a"/><path d="M2 25 L25 21 Q26 23 26 25Z" fill="#e0e0e0"/><path d="M2 25 V2 Q24 4 26 25Z" fill="none" stroke="#bdbdbd" stroke-width="1.600"/></svg>
<svg style="left:2010px;top:203px" width="28" height="20" viewBox="0 0 28 20"><g fill="#9a9a9a"><rect x="0" y="0" width="8" height="8"/><rect x="10" y="0" width="8" height="8" fill="#c4c4c4"/><rect x="20" y="0" width="8" height="8"/><rect x="0" y="10" width="8" height="8" fill="#c4c4c4"/><rect x="10" y="10" width="8" height="8"/><rect x="20" y="10" width="8" height="8" fill="#c4c4c4"/></g></svg>
<svg style="left:2010px;top:238px" width="28" height="32" viewBox="0 0 28 32"><rect x="8" y="18" width="12" height="12" fill="#b9b9b9"/><path d="M14 18 V4 M10 18 L4 8 q-2 -4 2 -2 l3 3 M18 18 L24 9 q1 -4 -4 -1 M14 4 l-2 3 h4Z" fill="none" stroke="#b9b9b9" stroke-width="2.600" stroke-linecap="round"/></svg>
<svg style="left:2010px;top:281px" width="28" height="30" viewBox="0 0 28 30"><circle cx="14" cy="8" r="6.500" fill="#b9b9b9"/><circle cx="7.500" cy="17" r="6.500" fill="#b9b9b9"/><circle cx="20.500" cy="17" r="6.500" fill="#b9b9b9"/><path d="M14 14 q0 10 -5 13 h10 q-5 -3 -5 -13Z" fill="#b9b9b9"/></svg>
<div class="t" style="left:2010px;top:343px;font-size:28px;color:#b9b9b9">A</div>
<div class="abs" style="left:2033px;top:343px;width:2px;height:28px;background:#b9b9b9"></div>
<div class="t" style="left:2012px;top:386px;font-size:28px;color:#b9b9b9;font-weight:bold">¶</div>
<div class="t" style="left:2011px;top:427px;font-family:'Liberation Serif',serif;font-style:italic;font-weight:bold;font-size:31px;color:#b9b9b9">O</div>
<svg style="left:2010px;top:492px" width="28" height="22" viewBox="0 0 28 22"><rect x="0" y="1" width="28" height="2" fill="#b9b9b9"/><rect x="0" y="8" width="28" height="3.400" fill="#b9b9b9"/><rect x="0" y="16" width="28" height="5" fill="#b9b9b9"/></svg>
<svg style="left:2010px;top:534px" width="28" height="20" viewBox="0 0 28 20"><defs><linearGradient id="lg2" x1="0" x2="1"><stop offset="0" stop-color="#333"/><stop offset="1" stop-color="#d0d0d0"/></linearGradient></defs><rect x="1" y="1" width="26" height="17" fill="url(#lg2)" stroke="#b9b9b9" stroke-width="1.600"/></svg>
<svg style="left:2008px;top:573px" width="30" height="30" viewBox="0 0 30 30"><circle cx="11" cy="11" r="9.500" fill="#bdbdbd"/><circle cx="18" cy="17" r="9.500" fill="#7c7c7c" stroke="#bdbdbd" stroke-width="1.600"/></svg>
<svg style="left:2010px;top:637px" width="28" height="26" viewBox="0 0 28 26"><rect x="3" y="3" width="22" height="20" fill="none" stroke="#b9b9b9" stroke-width="1.600"/><g fill="#b9b9b9"><rect x="0" y="0" width="6" height="6"/><rect x="22" y="0" width="6" height="6"/><rect x="0" y="20" width="6" height="6"/><rect x="22" y="20" width="6" height="6"/><rect x="11" y="0" width="6" height="5"/><rect x="11" y="21" width="6" height="5"/><rect x="0" y="10" width="5" height="6"/><rect x="23" y="10" width="5" height="6"/><rect x="12.500" y="11.500" width="3" height="3"/></g></svg>
<svg style="left:2010px;top:677px" width="28" height="30" viewBox="0 0 28 30"><rect x="1" y="0" width="2" height="28" fill="#b9b9b9"/><rect x="6" y="4" width="12" height="8" fill="#b9b9b9"/><rect x="6" y="16" width="19" height="8" fill="#b9b9b9"/></svg>
<svg style="left:2010px;top:721px" width="28" height="26" viewBox="0 0 28 26"><rect x="1" y="1" width="14" height="14" fill="#b9b9b9"/><rect x="10" y="9" width="15" height="15" fill="#b9b9b9" stroke="#323232" stroke-width="2"/></svg>
<svg style="left:2007px;top:781px" width="34" height="24" viewBox="0 0 34 24"><g fill="none" stroke="#b9b9b9" stroke-width="3.200"><path d="M15 7 H9 a5.500 5.500 0 0 0 0 11 h4 q4 0 6 -5.500"/><path d="M19 17 h6 a5.500 5.500 0 0 0 0 -11 h-4 q-4 0 -6 5.500"/></g></svg>
<svg style="left:2010px;top:843px" width="28" height="30" viewBox="0 0 28 30"><path d="M14 2 L26 8 V22 L14 28 L2 22 V8Z M2 8 L14 14 L26 8 M14 14 V28" fill="none" stroke="#b9b9b9" stroke-width="1.800" stroke-linejoin="round"/></svg>
<!-- ===== color panel ===== -->
<div class="abs" style="left:2053px;top:114px;width:506px;height:42px;background:#262626"></div>
<div class="abs" style="left:2053px;top:115px;width:74px;height:41px;background:#323232"></div>
<div class="abs" style="left:2053px;top:156px;width:506px;height:403px;background:#323232"></div>
<svg style="left:2060px;top:127px" width="8" height="14" viewBox="0 0 8 14"><path d="M1 5 L4 1.500 L7 5 M1 9 L4 12.500 L7 9" fill="none" stroke="#a8a8a8" stroke-width="1.300"/></svg>
<div class="t" style="left:2076px;top:125px;font-size:15px;font-weight:bold;color:#f0f0f0">Color</div>
<div class="abs" style="left:2129px;top:115px;width:1px;height:41px;background:#1f1f1f"></div>
<div class="t" style="left:2142px;top:125px;font-size:15px;font-weight:bold;color:#9c9c9c">Properties</div>
<div class="abs" style="left:2228px;top:115px;width:1px;height:41px;background:#303030"></div>
<div class="t" style="left:2243px;top:125px;font-size:15px;font-weight:bold;color:#9c9c9c">Libraries</div>
<div class="abs" style="left:2316px;top:115px;width:1px;height:41px;background:#303030"></div>
<div class="abs" style="left:2533px;top:131px;width:16px;height:2px;background:#8c8c8c;box-shadow:0 4.500px 0 #8c8c8c,0 9px 0 #8c8c8c"></div>
<svg style="left:2061px;top:169px" width="60" height="21" viewBox="0 0 60 21"><rect x="0" y="0" width="60" height="21" fill="#1b1b1b"/><rect x="1" y="1" width="19" height="19" fill="#fff"/><path d="M1 20 L20 1" stroke="#e8202a" stroke-width="2.800"/><rect x="20" y="1" width="20" height="19" fill="#000"/><rect x="40" y="1" width="19" height="19" fill="#fff"/></svg>
<div class="t" style="left:2428px;top:173px;font-size:16px;color:#a8a8a8">#</div>
<div class="abs" style="left:2443px;top:166px;width:89px;height:29px;background:#262626;border:1px solid #3c3c3c;border-radius:3px"></div>
<div class="t" style="left:2451px;top:173px;font-size:15px;color:#d8d8d8">000000</div>
<div class="abs" style="left:2062px;top:205px;width:471px;height:344px;background:#262626"></div>
<div class="abs" style="left:2063px;top:206px;width:469px;height:342px;background:linear-gradient(to bottom,#fff 0%,rgba(255,255,255,0) 50%,rgba(0,0,0,0) 50%,#000 100%),linear-gradient(to right,#f00 0%,#ff0 16.660%,#0f0 33.330%,#0ff 50%,#00f 66.660%,#f0f 83.330%,#f00 100%)"></div>
<div class="abs" style="left:2053px;top:559px;width:506px;height:3px;background:#1f1f1f"></div>
<!-- ===== appearance panel tabs ===== -->
<div class="abs" style="left:2053px;top:562px;width:506px;height:40px;background:#262626"></div>
<div class="abs" style="left:2153px;top:562px;width:109px;height:40px;background:#323232"></div>
<div class="t" style="left:2067px;top:572px;font-size:15px;font-weight:bold;color:#9c9c9c">Artboards</div>
<div class="t" style="left:2166px;top:572px;font-size:15px;font-weight:bold;color:#f0f0f0">Appearance</div>
<div class="abs" style="left:2533px;top:578px;width:16px;height:2px;background:#8c8c8c;box-shadow:0 4.500px 0 #8c8c8c,0 9px 0 #8c8c8c"></div>
<div class="abs" style="left:2053px;top:602px;width:506px;height:7px;background:#1f1f1f"></div>
<div class="abs" style="left:2053px;top:604px;width:506px;height:3px;background:#2e2e2e"></div>
<!-- ===== layers panel ===== -->
<div class="abs" style="left:2053px;top:609px;width:506px;height:40px;background:#262626"></div>
<div class="abs" style="left:2053px;top:609px;width:71px;height:40px;background:#323232"></div>
<div class="t" style="left:2067px;top:618px;font-size:15px;font-weight:bold;color:#f0f0f0">Layers</div>
<div class="abs" style="left:2533px;top:624px;width:16px;height:2px;background:#8c8c8c;box-shadow:0 4.500px 0 #8c8c8c,0 9px 0 #8c8c8c"></div>
<div class="abs" style="left:2053px;top:649px;width:506px;height:717px;background:#323232"></div>
<div class="abs" style="left:2061px;top:658px;width:489px;height:679px;border:1px solid #3e3e3e;border-radius:3px"></div>
<div class="abs" style="left:2062px;top:690.0px;width:487px;height:1px;background:#3c3c3c"></div>
<svg style="left:2067px;top:667.5px" width="20" height="14" viewBox="0 0 20 14"><path d="M1 7 Q10 -3 19 7 Q10 17 1 7Z" fill="none" stroke="#c4c4c4" stroke-width="1.600"/><circle cx="10" cy="7" r="3.600" fill="#c4c4c4"/><circle cx="10" cy="7" r="1.500" fill="#323232"/></svg>
<div class="abs" style="left:2127px;top:659.5px;width:4px;height:30.500px;background:#3fdfe6"></div>
<div class="chv" style="left:2145px;top:667.5px;width:7px;height:7px;border-width:1.600px;border-color:#c8c8c8"></div>
<svg style="left:2170px;top:661.0px" width="28" height="28" viewBox="-1 -1 28 28"><rect x="0" y="0" width="26" height="26" fill="#fff" stroke="#0a0a0a" stroke-width="1.600"/><rect x="4" y="4" width="18" height="13" fill="#fff" stroke="#222" stroke-width="1.400"/><path d="M13 17 V21 M13 20 L8 24 M13 20 L18 24" stroke="#222" stroke-width="1.200" fill="none"/></svg>
<div class="t" style="left:2204px;top:668.5px;font-size:15px;color:#e2e2e2">Layer 6</div>
<svg style="left:2503px;top:667.5px" width="16" height="16" viewBox="0 0 16 16"><circle cx="8" cy="8" r="5.600" fill="none" stroke="#d0d0d0" stroke-width="1.500"/></svg>
<div class="abs" style="left:2062px;top:721.5px;width:487px;height:1px;background:#3c3c3c"></div>
<svg style="left:2067px;top:699.0px" width="20" height="14" viewBox="0 0 20 14"><path d="M1 7 Q10 -3 19 7 Q10 17 1 7Z" fill="none" stroke="#c4c4c4" stroke-width="1.600"/><circle cx="10" cy="7" r="3.600" fill="#c4c4c4"/><circle cx="10" cy="7" r="1.500" fill="#323232"/></svg>
<div class="abs" style="left:2127px;top:691.0px;width:4px;height:30.500px;background:#3fdfe6"></div>
<div class="chr" style="left:2176px;top:702.0px;width:7px;height:7px;border-width:1.600px;border-color:#c8c8c8"></div>
<svg style="left:2205px;top:692.5px" width="28" height="28" viewBox="-1 -1 28 28"><rect x="0" y="0" width="26" height="26" fill="#fff" stroke="#0a0a0a" stroke-width="1.600"/><rect x="4" y="4" width="18" height="13" fill="#fff" stroke="#222" stroke-width="1.400"/><path d="M13 17 V21 M13 20 L8 24 M13 20 L18 24" stroke="#222" stroke-width="1.200" fill="none"/></svg>
<div class="t" style="left:2239px;top:700.0px;font-size:15px;color:#e2e2e2">&lt;Group&gt;</div>
<svg style="left:2503px;top:699.0px" width="16" height="16" viewBox="0 0 16 16"><circle cx="8" cy="8" r="5.600" fill="none" stroke="#d0d0d0" stroke-width="1.500"/></svg>
<div class="abs" style="left:2062px;top:753.0px;width:487px;height:1px;background:#3c3c3c"></div>
<svg style="left:2067px;top:730.5px" width="20" height="14" viewBox="0 0 20 14"><path d="M1 7 Q10 -3 19 7 Q10 17 1 7Z" fill="none" stroke="#c4c4c4" stroke-width="1.600"/><circle cx="10" cy="7" r="3.600" fill="#c4c4c4"/><circle cx="10" cy="7" r="1.500" fill="#323232"/></svg>
<div class="abs" style="left:2127px;top:722.5px;width:4px;height:30.500px;background:#e645d6"></div>
<div class="chv" style="left:2145px;top:730.5px;width:7px;height:7px;border-width:1.600px;border-color:#c8c8c8"></div>
<svg style="left:2170px;top:724.0px" width="28" height="28" viewBox="-1 -1 28 28"><rect x="0" y="0" width="26" height="26" fill="#fff" stroke="#0a0a0a" stroke-width="1.600"/><circle cx="9.500" cy="6.500" r="2" fill="#222"/><rect x="7.500" y="8.500" width="4" height="7" fill="#222"/><rect x="8" y="15" width="3" height="8" fill="#1f3a88"/><circle cx="16.500" cy="5.500" r="2" fill="#8b6232"/><rect x="14.500" y="7.500" width="4.500" height="8" fill="#212b32"/><rect x="15" y="15" width="3.500" height="8" fill="#36474f"/></svg>
<div class="t" style="left:2204px;top:731.5px;font-size:15px;color:#e2e2e2">characters</div>
<svg style="left:2503px;top:730.5px" width="16" height="16" viewBox="0 0 16 16"><circle cx="8" cy="8" r="5.600" fill="none" stroke="#d0d0d0" stroke-width="1.500"/></svg>
<div class="abs" style="left:2526px;top:733.5px;width:9px;height:9px;background:#e645d6;border:1px solid #111"></div>
<div class="abs" style="left:2062px;top:754.0px;width:487px;height:30.500px;background:#3b5068"></div>
<svg style="left:2540px;top:754.0px" width="9" height="9" viewBox="0 0 9 9"><path d="M0 0 H9 V9Z" fill="#c8c8c8"/></svg>
<div class="abs" style="left:2062px;top:784.5px;width:487px;height:1px;background:#3c3c3c"></div>
<svg style="left:2067px;top:762.0px" width="20" height="14" viewBox="0 0 20 14"><path d="M1 7 Q10 -3 19 7 Q10 17 1 7Z" fill="none" stroke="#c4c4c4" stroke-width="1.600"/><circle cx="10" cy="7" r="3.600" fill="#c4c4c4"/><circle cx="10" cy="7" r="1.500" fill="#323232"/></svg>
<div class="abs" style="left:2127px;top:754.0px;width:4px;height:30.500px;background:#4f4ff2"></div>
<div class="chv" style="left:2180px;top:762.0px;width:7px;height:7px;border-width:1.600px;border-color:#c8c8c8"></div>
<svg style="left:2205px;top:755.5px" width="28" height="28" viewBox="-1 -1 28 28"><rect x="0" y="0" width="26" height="26" fill="#fff" stroke="#0a0a0a" stroke-width="1.600"/><circle cx="13" cy="6" r="2.200" fill="#8b6232"/><path d="M8 13 L11 8.500 H15 L18 13 L15.500 15 V15 H10.500 L8 13Z" fill="#212b32"/><rect x="10.500" y="9" width="5" height="7" fill="#212b32"/><rect x="11" y="16" width="4.500" height="8" fill="#36474f"/></svg>
<div class="t" style="left:2239px;top:763.0px;font-size:15px;color:#e2e2e2">S</div>
<svg style="left:2503px;top:762.0px" width="16" height="16" viewBox="0 0 16 16"><circle cx="8" cy="8" r="5.600" fill="none" stroke="#d0d0d0" stroke-width="1.500"/></svg>
<div class="abs" style="left:2525px;top:763.5px;width:12px;height:12px;background:#4f4ff2;border:1px solid #111"></div>
<div class="abs" style="left:2062px;top:816.0px;width:487px;height:1px;background:#3c3c3c"></div>
<svg style="left:2067px;top:793.5px" width="20" height="14" viewBox="0 0 20 14"><path d="M1 7 Q10 -3 19 7 Q10 17 1 7Z" fill="none" stroke="#c4c4c4" stroke-width="1.600"/><circle cx="10" cy="7" r="3.600" fill="#c4c4c4"/><circle cx="10" cy="7" r="1.500" fill="#323232"/></svg>
<div class="abs" style="left:2127px;top:785.5px;width:4px;height:30.500px;background:#4f4ff2"></div>
<div class="chr" style="left:2210px;top:796.5px;width:7px;height:7px;border-width:1.600px;border-color:#c8c8c8"></div>
<svg style="left:2239px;top:787.0px" width="28" height="28" viewBox="-1 -1 28 28"><rect x="0" y="0" width="26" height="26" fill="#fff" stroke="#0a0a0a" stroke-width="1.600"/><circle cx="13" cy="6" r="2.200" fill="#8b6232"/><path d="M8 13 L11 8.500 H15 L18 13 L15.500 15 V15 H10.500 L8 13Z" fill="#212b32"/><rect x="10.500" y="9" width="5" height="7" fill="#212b32"/><rect x="11" y="16" width="4.500" height="8" fill="#36474f"/></svg>
<div class="t" style="left:2273px;top:794.5px;font-size:15px;color:#e2e2e2">&lt;Group&gt;</div>
<svg style="left:2501px;top:791.0px" width="20" height="20" viewBox="0 0 20 20"><circle cx="10" cy="10" r="8.300" fill="none" stroke="#d0d0d0" stroke-width="1.400"/><circle cx="10" cy="10" r="5" fill="none" stroke="#d0d0d0" stroke-width="1.400"/></svg>
<div class="abs" style="left:2525px;top:795.0px;width:12px;height:12px;background:#4f4ff2;border:1px solid #111"></div>
<div class="abs" style="left:2062px;top:847.5px;width:487px;height:1px;background:#3c3c3c"></div>
<svg style="left:2067px;top:825.0px" width="20" height="14" viewBox="0 0 20 14"><path d="M1 7 Q10 -3 19 7 Q10 17 1 7Z" fill="none" stroke="#c4c4c4" stroke-width="1.600"/><circle cx="10" cy="7" r="3.600" fill="#c4c4c4"/><circle cx="10" cy="7" r="1.500" fill="#323232"/></svg>
<div class="abs" style="left:2127px;top:817.0px;width:4px;height:30.500px;background:#4fe84f"></div>
<div class="chr" style="left:2176px;top:828.0px;width:7px;height:7px;border-width:1.600px;border-color:#c8c8c8"></div>
<svg style="left:2205px;top:818.5px" width="28" height="28" viewBox="-1 -1 28 28"><rect x="0" y="0" width="26" height="26" fill="#fff" stroke="#0a0a0a" stroke-width="1.600"/><circle cx="13" cy="6" r="2.200" fill="#111"/><path d="M8 13 L11 8.500 H15 L18 13 L15.500 15 H10.500Z" fill="#212121"/><rect x="10.500" y="9" width="5" height="7" fill="#212121"/><rect x="11" y="16" width="4" height="8" fill="#1f3a88"/></svg>
<div class="t" style="left:2239px;top:826.0px;font-size:15px;color:#e2e2e2">C</div>
<svg style="left:2503px;top:825.0px" width="16" height="16" viewBox="0 0 16 16"><circle cx="8" cy="8" r="5.600" fill="none" stroke="#d0d0d0" stroke-width="1.500"/></svg>
<div class="abs" style="left:2062px;top:879.0px;width:487px;height:1px;background:#3c3c3c"></div>
<svg style="left:2067px;top:856.5px" width="20" height="14" viewBox="0 0 20 14"><path d="M1 7 Q10 -3 19 7 Q10 17 1 7Z" fill="none" stroke="#c4c4c4" stroke-width="1.600"/><circle cx="10" cy="7" r="3.600" fill="#c4c4c4"/><circle cx="10" cy="7" r="1.500" fill="#323232"/></svg>
<div class="abs" style="left:2127px;top:848.5px;width:4px;height:30.500px;background:#4d7ff2"></div>
<div class="chv" style="left:2145px;top:856.5px;width:7px;height:7px;border-width:1.600px;border-color:#c8c8c8"></div>
<svg style="left:2170px;top:850.0px" width="28" height="28" viewBox="-1 -1 28 28"><rect x="0" y="0" width="26" height="26" fill="#fff" stroke="#0a0a0a" stroke-width="1.600"/><path d="M20 9 l1 4 l1 -4" stroke="#667" stroke-width="1" fill="none"/></svg>
<div class="t" style="left:2204px;top:857.5px;font-size:15px;color:#e2e2e2">Layer 1</div>
<svg style="left:2503px;top:856.5px" width="16" height="16" viewBox="0 0 16 16"><circle cx="8" cy="8" r="5.600" fill="none" stroke="#d0d0d0" stroke-width="1.500"/></svg>
<div class="abs" style="left:2062px;top:910.5px;width:487px;height:1px;background:#3c3c3c"></div>
<svg style="left:2067px;top:888.0px" width="20" height="14" viewBox="0 0 20 14"><path d="M1 7 Q10 -3 19 7 Q10 17 1 7Z" fill="none" stroke="#c4c4c4" stroke-width="1.600"/><circle cx="10" cy="7" r="3.600" fill="#c4c4c4"/><circle cx="10" cy="7" r="1.500" fill="#323232"/></svg>
<div class="abs" style="left:2127px;top:880.0px;width:4px;height:30.500px;background:#4d7ff2"></div>
<svg style="left:2205px;top:881.5px" width="28" height="28" viewBox="-1 -1 28 28"><rect x="0" y="0" width="26" height="26" fill="#fff" stroke="#0a0a0a" stroke-width="1.600"/><rect x="4" y="4" width="18" height="13" fill="#fff" stroke="#222" stroke-width="1.400"/><path d="M13 17 V21 M13 20 L8 24 M13 20 L18 24" stroke="#222" stroke-width="1.200" fill="none"/><path d="M8 11 h10" stroke="#999" stroke-width="1"/></svg>
<div class="t" style="left:2239px;top:889.0px;font-size:15px;color:#e2e2e2">&lt;Image&gt;</div>
<svg style="left:2503px;top:888.0px" width="16" height="16" viewBox="0 0 16 16"><circle cx="8" cy="8" r="5.600" fill="none" stroke="#d0d0d0" stroke-width="1.500"/></svg>
<div class="abs" style="left:2062px;top:942.0px;width:487px;height:1px;background:#3c3c3c"></div>
<svg style="left:2067px;top:919.5px" width="20" height="14" viewBox="0 0 20 14"><path d="M1 7 Q10 -3 19 7 Q10 17 1 7Z" fill="none" stroke="#c4c4c4" stroke-width="1.600"/><circle cx="10" cy="7" r="3.600" fill="#c4c4c4"/><circle cx="10" cy="7" r="1.500" fill="#323232"/></svg>
<div class="abs" style="left:2127px;top:911.5px;width:4px;height:30.500px;background:#4d7ff2"></div>
<svg style="left:2205px;top:913.0px" width="28" height="28" viewBox="-1 -1 28 28"><rect x="0" y="0" width="26" height="26" fill="#fff" stroke="#0a0a0a" stroke-width="1.600"/><rect x="4" y="6" width="3" height="2" fill="#d8a020"/><rect x="9" y="13" width="3" height="2" fill="#444"/><rect x="14" y="6" width="3" height="2" fill="#c33"/><rect x="19" y="13" width="3" height="2" fill="#28a"/><rect x="6" y="6" width="3" height="2" fill="#555"/><rect x="11" y="13" width="3" height="2" fill="#d8a020"/><rect x="16" y="6" width="3" height="2" fill="#333"/><rect x="21" y="13" width="3" height="2" fill="#2a7"/><rect x="8" y="6" width="3" height="2" fill="#999"/><rect x="13" y="13" width="3" height="2" fill="#c80"/><rect x="18" y="6" width="3" height="2" fill="#456"/><rect x="5" y="13" width="3" height="2" fill="#b33"/></svg>
<div class="t" style="left:2239px;top:920.5px;font-size:15px;color:#e2e2e2">&lt;Image&gt;</div>
<svg style="left:2503px;top:919.5px" width="16" height="16" viewBox="0 0 16 16"><circle cx="8" cy="8" r="5.600" fill="none" stroke="#d0d0d0" stroke-width="1.500"/></svg>
<div class="abs" style="left:2062px;top:973.5px;width:487px;height:1px;background:#3c3c3c"></div>
<svg style="left:2067px;top:951.0px" width="20" height="14" viewBox="0 0 20 14"><path d="M1 7 Q10 -3 19 7 Q10 17 1 7Z" fill="none" stroke="#c4c4c4" stroke-width="1.600"/><circle cx="10" cy="7" r="3.600" fill="#c4c4c4"/><circle cx="10" cy="7" r="1.500" fill="#323232"/></svg>
<div class="abs" style="left:2127px;top:943.0px;width:4px;height:30.500px;background:#4d7ff2"></div>
<svg style="left:2205px;top:944.5px" width="28" height="28" viewBox="-1 -1 28 28"><rect x="0" y="0" width="26" height="26" fill="#fff" stroke="#0a0a0a" stroke-width="1.600"/><rect x="5" y="3" width="16" height="20" fill="#ddd"/><rect x="6" y="4" width="4" height="2" fill="#c33"/><rect x="11" y="7" width="4" height="2" fill="#2a7"/><rect x="16" y="10" width="4" height="2" fill="#d8a020"/><rect x="8" y="13" width="4" height="2" fill="#28a"/><rect x="13" y="16" width="4" height="2" fill="#555"/><rect x="18" y="19" width="4" height="2" fill="#e55"/><rect x="10" y="4" width="4" height="2" fill="#393"/><rect x="15" y="7" width="4" height="2" fill="#b83"/><rect x="7" y="10" width="4" height="2" fill="#36c"/><rect x="12" y="13" width="4" height="2" fill="#c3c"/><rect x="17" y="16" width="4" height="2" fill="#888"/><rect x="9" y="19" width="4" height="2" fill="#d33"/></svg>
<div class="t" style="left:2239px;top:952.0px;font-size:15px;color:#e2e2e2">&lt;Image&gt;</div>
<svg style="left:2503px;top:951.0px" width="16" height="16" viewBox="0 0 16 16"><circle cx="8" cy="8" r="5.600" fill="none" stroke="#d0d0d0" stroke-width="1.500"/></svg>
<div class="abs" style="left:2062px;top:1005.0px;width:487px;height:1px;background:#3c3c3c"></div>
<svg style="left:2067px;top:982.5px" width="20" height="14" viewBox="0 0 20 14"><path d="M1 7 Q10 -3 19 7 Q10 17 1 7Z" fill="none" stroke="#c4c4c4" stroke-width="1.600"/><circle cx="10" cy="7" r="3.600" fill="#c4c4c4"/><circle cx="10" cy="7" r="1.500" fill="#323232"/></svg>
<div class="abs" style="left:2127px;top:974.5px;width:4px;height:30.500px;background:#4d7ff2"></div>
<svg style="left:2205px;top:976.0px" width="28" height="28" viewBox="-1 -1 28 28"><rect x="0" y="0" width="26" height="26" fill="#fff" stroke="#0a0a0a" stroke-width="1.600"/><rect x="5" y="3" width="16" height="20" fill="#3a7f7a"/><rect x="6" y="5" width="5" height="2" fill="#c33"/><rect x="11" y="8" width="5" height="2" fill="#222"/><rect x="16" y="11" width="5" height="2" fill="#d8a020"/><rect x="10" y="14" width="5" height="2" fill="#eee"/><rect x="15" y="17" width="5" height="2" fill="#555"/><rect x="9" y="20" width="5" height="2" fill="#e55"/><rect x="14" y="7" width="5" height="2" fill="#222"/><rect x="8" y="10" width="5" height="2" fill="#b83"/><rect x="13" y="13" width="5" height="2" fill="#ddd"/><rect x="7" y="16" width="5" height="2" fill="#333"/></svg>
<div class="t" style="left:2239px;top:983.5px;font-size:15px;color:#e2e2e2">&lt;Image&gt;</div>
<svg style="left:2503px;top:982.5px" width="16" height="16" viewBox="0 0 16 16"><circle cx="8" cy="8" r="5.600" fill="none" stroke="#d0d0d0" stroke-width="1.500"/></svg>
<div class="abs" style="left:2062px;top:1036.5px;width:487px;height:1px;background:#3c3c3c"></div>
<svg style="left:2067px;top:1014.0px" width="20" height="14" viewBox="0 0 20 14"><path d="M1 7 Q10 -3 19 7 Q10 17 1 7Z" fill="none" stroke="#c4c4c4" stroke-width="1.600"/><circle cx="10" cy="7" r="3.600" fill="#c4c4c4"/><circle cx="10" cy="7" r="1.500" fill="#323232"/></svg>
<div class="abs" style="left:2127px;top:1006.0px;width:4px;height:30.500px;background:#4d7ff2"></div>
<svg style="left:2205px;top:1007.5px" width="28" height="28" viewBox="-1 -1 28 28"><rect x="0" y="0" width="26" height="26" fill="#fff" stroke="#0a0a0a" stroke-width="1.600"/><text x="3" y="15" font-family="Liberation Sans, sans-serif" font-weight="bold" font-size="3.600" fill="#111">Inspiratie</text></svg>
<div class="t" style="left:2239px;top:1015.0px;font-size:15px;color:#e2e2e2">Inspiratie</div>
<svg style="left:2503px;top:1014.0px" width="16" height="16" viewBox="0 0 16 16"><circle cx="8" cy="8" r="5.600" fill="none" stroke="#d0d0d0" stroke-width="1.500"/></svg>
<div class="abs" style="left:2062px;top:1068.0px;width:487px;height:1px;background:#3c3c3c"></div>
<svg style="left:2067px;top:1045.5px" width="20" height="14" viewBox="0 0 20 14"><path d="M1 7 Q10 -3 19 7 Q10 17 1 7Z" fill="none" stroke="#c4c4c4" stroke-width="1.600"/><circle cx="10" cy="7" r="3.600" fill="#c4c4c4"/><circle cx="10" cy="7" r="1.500" fill="#323232"/></svg>
<div class="abs" style="left:2127px;top:1037.5px;width:4px;height:30.500px;background:#f04a4a"></div>
<div class="chr" style="left:2141px;top:1048.5px;width:7px;height:7px;border-width:1.600px;border-color:#c8c8c8"></div>
<svg style="left:2170px;top:1039.0px" width="28" height="28" viewBox="-1 -1 28 28"><rect x="0" y="0" width="26" height="26" fill="#fff" stroke="#0a0a0a" stroke-width="1.600"/><rect x="10" y="2" width="14" height="22" fill="#9a9a9a"/><path d="M13 8 q4 -3 7 0 q-6 4 0 7 q3 3 -4 5" stroke="#eee" stroke-width="1.300" fill="none"/><path d="M4 8 h3 M4 12 h4 M5 16 h2" stroke="#666" stroke-width="1"/></svg>
<div class="t" style="left:2204px;top:1046.5px;font-size:15px;color:#e2e2e2">samen</div>
<svg style="left:2503px;top:1045.5px" width="16" height="16" viewBox="0 0 16 16"><circle cx="8" cy="8" r="5.600" fill="none" stroke="#d0d0d0" stroke-width="1.500"/></svg>
<div class="abs" style="left:2092px;top:659px;width:1px;height:410px;background:#3c3c3c"></div>
<div class="abs" style="left:2124px;top:659px;width:1px;height:410px;background:#3c3c3c"></div>
<div class="abs" style="left:2494px;top:659px;width:1px;height:410px;background:#3c3c3c"></div>
<div class="t" style="left:2061px;top:1344px;font-size:15.500px;color:#a0a0a0">4 Layers</div>
<svg style="left:2302px;top:1341px" width="22" height="22" viewBox="0 0 22 22"><path d="M9 5 H3 V19 H17 V13" fill="none" stroke="#c8c8c8" stroke-width="1.800"/><path d="M12 2.500 H19.500 V10 M19 3 L9.500 12.500" fill="none" stroke="#c8c8c8" stroke-width="1.800"/></svg>
<svg style="left:2341px;top:1341px" width="22" height="22" viewBox="0 0 22 22"><circle cx="8.500" cy="8.500" r="6" fill="none" stroke="#c8c8c8" stroke-width="1.800"/><path d="M13 13 L19.500 19.500" stroke="#c8c8c8" stroke-width="2.600" stroke-linecap="round"/></svg>
<svg style="left:2379px;top:1341px" width="22" height="22" viewBox="0 0 22 22"><rect x="8" y="8" width="11" height="11" fill="none" stroke="#777" stroke-width="1.500"/><rect x="3" y="3" width="11" height="11" fill="none" stroke="#c8c8c8" stroke-width="1.800"/><rect x="7" y="7" width="8" height="8" fill="#8c8c8c"/></svg>
<svg style="left:2416px;top:1341px" width="26" height="22" viewBox="0 0 26 22"><path d="M2 2 V8 H8 M5.500 5 L8.500 8 L5.500 11" fill="none" stroke="#c8c8c8" stroke-width="1.800"/><rect x="11" y="5" width="13" height="13" fill="none" stroke="#c8c8c8" stroke-width="1.800"/><path d="M17.500 8 V15 M14 11.500 H21" stroke="#c8c8c8" stroke-width="1.800"/></svg>
<svg style="left:2458px;top:1341px" width="22" height="22" viewBox="0 0 22 22"><rect x="3" y="4" width="15" height="15" fill="none" stroke="#c8c8c8" stroke-width="1.800"/><path d="M10.500 7.500 V15.500 M6.500 11.500 H14.500" stroke="#c8c8c8" stroke-width="1.800"/></svg>
<svg style="left:2497px;top:1340px" width="22" height="24" viewBox="0 0 22 24"><path d="M3 6 H19 M8 6 V3 H14 V6 M5 6 V21 H17 V6 M8.500 9 V18 M11 9 V18 M13.500 9 V18" fill="none" stroke="#c8c8c8" stroke-width="1.700"/></svg>
<!-- status.html -->
<!-- ===== STATUS BAR ===== -->
<div class="abs" style="left:62px;top:1343px;width:1926px;height:23px;background:#292929"></div>
<div class="abs" style="left:62px;top:1343px;width:765px;height:23px;background:#323232"></div>
<div class="abs" style="left:66px;top:1344px;width:74px;height:22px;background:#262626;border:1px solid #3a3a3a"></div>
<div class="t" style="left:70px;top:1350px;font-size:15px;color:#d8d8d8">197,25%</div>
<div class="chv" style="left:151px;top:1350px;width:7px;height:7px"></div>
<div class="abs" style="left:176px;top:1344px;width:74px;height:22px;background:#262626;border:1px solid #3a3a3a"></div>
<div class="t" style="left:181px;top:1350px;font-size:15px;color:#d8d8d8">0°</div>
<div class="chv" style="left:261px;top:1350px;width:7px;height:7px"></div>
<svg style="left:291px;top:1349px" width="44" height="14" viewBox="0 0 44 14"><g fill="#5a5a5a"><rect x="1" y="1" width="2.600" height="12"/><path d="M13 1 V13 L4.500 7Z"/><path d="M37 1 V13 L28.500 7Z"/></g></svg>
<div class="abs" style="left:340px;top:1344px;width:60px;height:22px;background:#262626;border:1px solid #3a3a3a"></div>
<div class="t" style="left:346px;top:1350px;font-size:15px;color:#d8d8d8">1</div>
<div class="chv" style="left:411px;top:1350px;width:7px;height:7px"></div>
<svg style="left:441px;top:1349px" width="44" height="14" viewBox="0 0 44 14"><g fill="#cfcfcf"><path d="M3 1 V13 L11.500 7Z"/><path d="M27 1 V13 L35.500 7Z"/><rect x="36.500" y="1" width="2.600" height="12"/></g></svg>
<div class="abs" style="left:493px;top:1344px;width:1px;height:22px;background:#262626"></div>
<div class="t" style="left:612px;top:1350px;font-size:15px;color:#9a9a9a">Selection</div>
<svg style="left:800px;top:1349px" width="14" height="14" viewBox="0 0 14 14"><path d="M3 1 V13 L11.500 7Z" fill="#cfcfcf"/></svg>
<div class="chl" style="left:830px;top:1351px;width:7px;height:7px;border-color:#858585;border-width:2px"></div>
<div class="chr" style="left:1944px;top:1351px;width:7px;height:7px;border-color:#858585;border-width:2px"></div>
<div class="abs" style="left:1364px;top:1345px;width:37px;height:20px;border-radius:10px;background:#3c3c3c"></div>
<div class="abs" style="left:1964px;top:1343px;width:24px;height:23px;background:#323232"></div>
<!-- bottom navy strip (taskbar sliver) -->
<div class="abs" style="left:0;top:1366px;width:2559px;height:2px;background:#1a1a1a"></div>
<div class="abs" style="left:0;top:1368px;width:2559px;height:5px;background:#221a5c"></div>
<!-- dialog.html -->
<!-- ===== ERROR DIALOG ===== -->
<div class="abs" style="left:960px;top:583px;width:638px;height:193px;border-radius:11px;background:#323232;box-shadow:0 14px 60px 10px rgba(0,0,0,.42),0 2px 14px rgba(0,0,0,.35);overflow:hidden">
  <div class="abs" style="left:0;top:0;width:638px;height:43px;background:#ffffff"></div>
  <div class="t" style="left:11px;top:12px;font-size:18px;color:#111">Adobe Illustrator</div>
  <svg style="left:23px;top:64px" width="48" height="48" viewBox="0 0 48 48"><path d="M24 3.500 Q25.500 3.500 26.300 5 L45.500 42 Q46.500 45 43.500 45 H4.500 Q1.500 45 2.500 42 L21.700 5 Q22.500 3.500 24 3.500Z" fill="#f5c400"/><rect x="21.200" y="15" width="5.600" height="17" rx="1" fill="#111"/><rect x="21.200" y="34.500" width="5.600" height="5.600" rx="1" fill="#111"/></svg>
  <div class="t" style="left:100px;top:70px;font-size:17.500px;color:#fff;letter-spacing:0.220px">An error occurred while processing the appearance of an object.</div>
  <div class="abs" style="left:495px;top:140px;width:120px;height:31px;border-radius:16px;background:#3f9cf3"></div>
  <div class="t" style="left:543px;top:147px;font-size:18px;color:#fff">OK</div>
</div>
</div>
</body></html>
